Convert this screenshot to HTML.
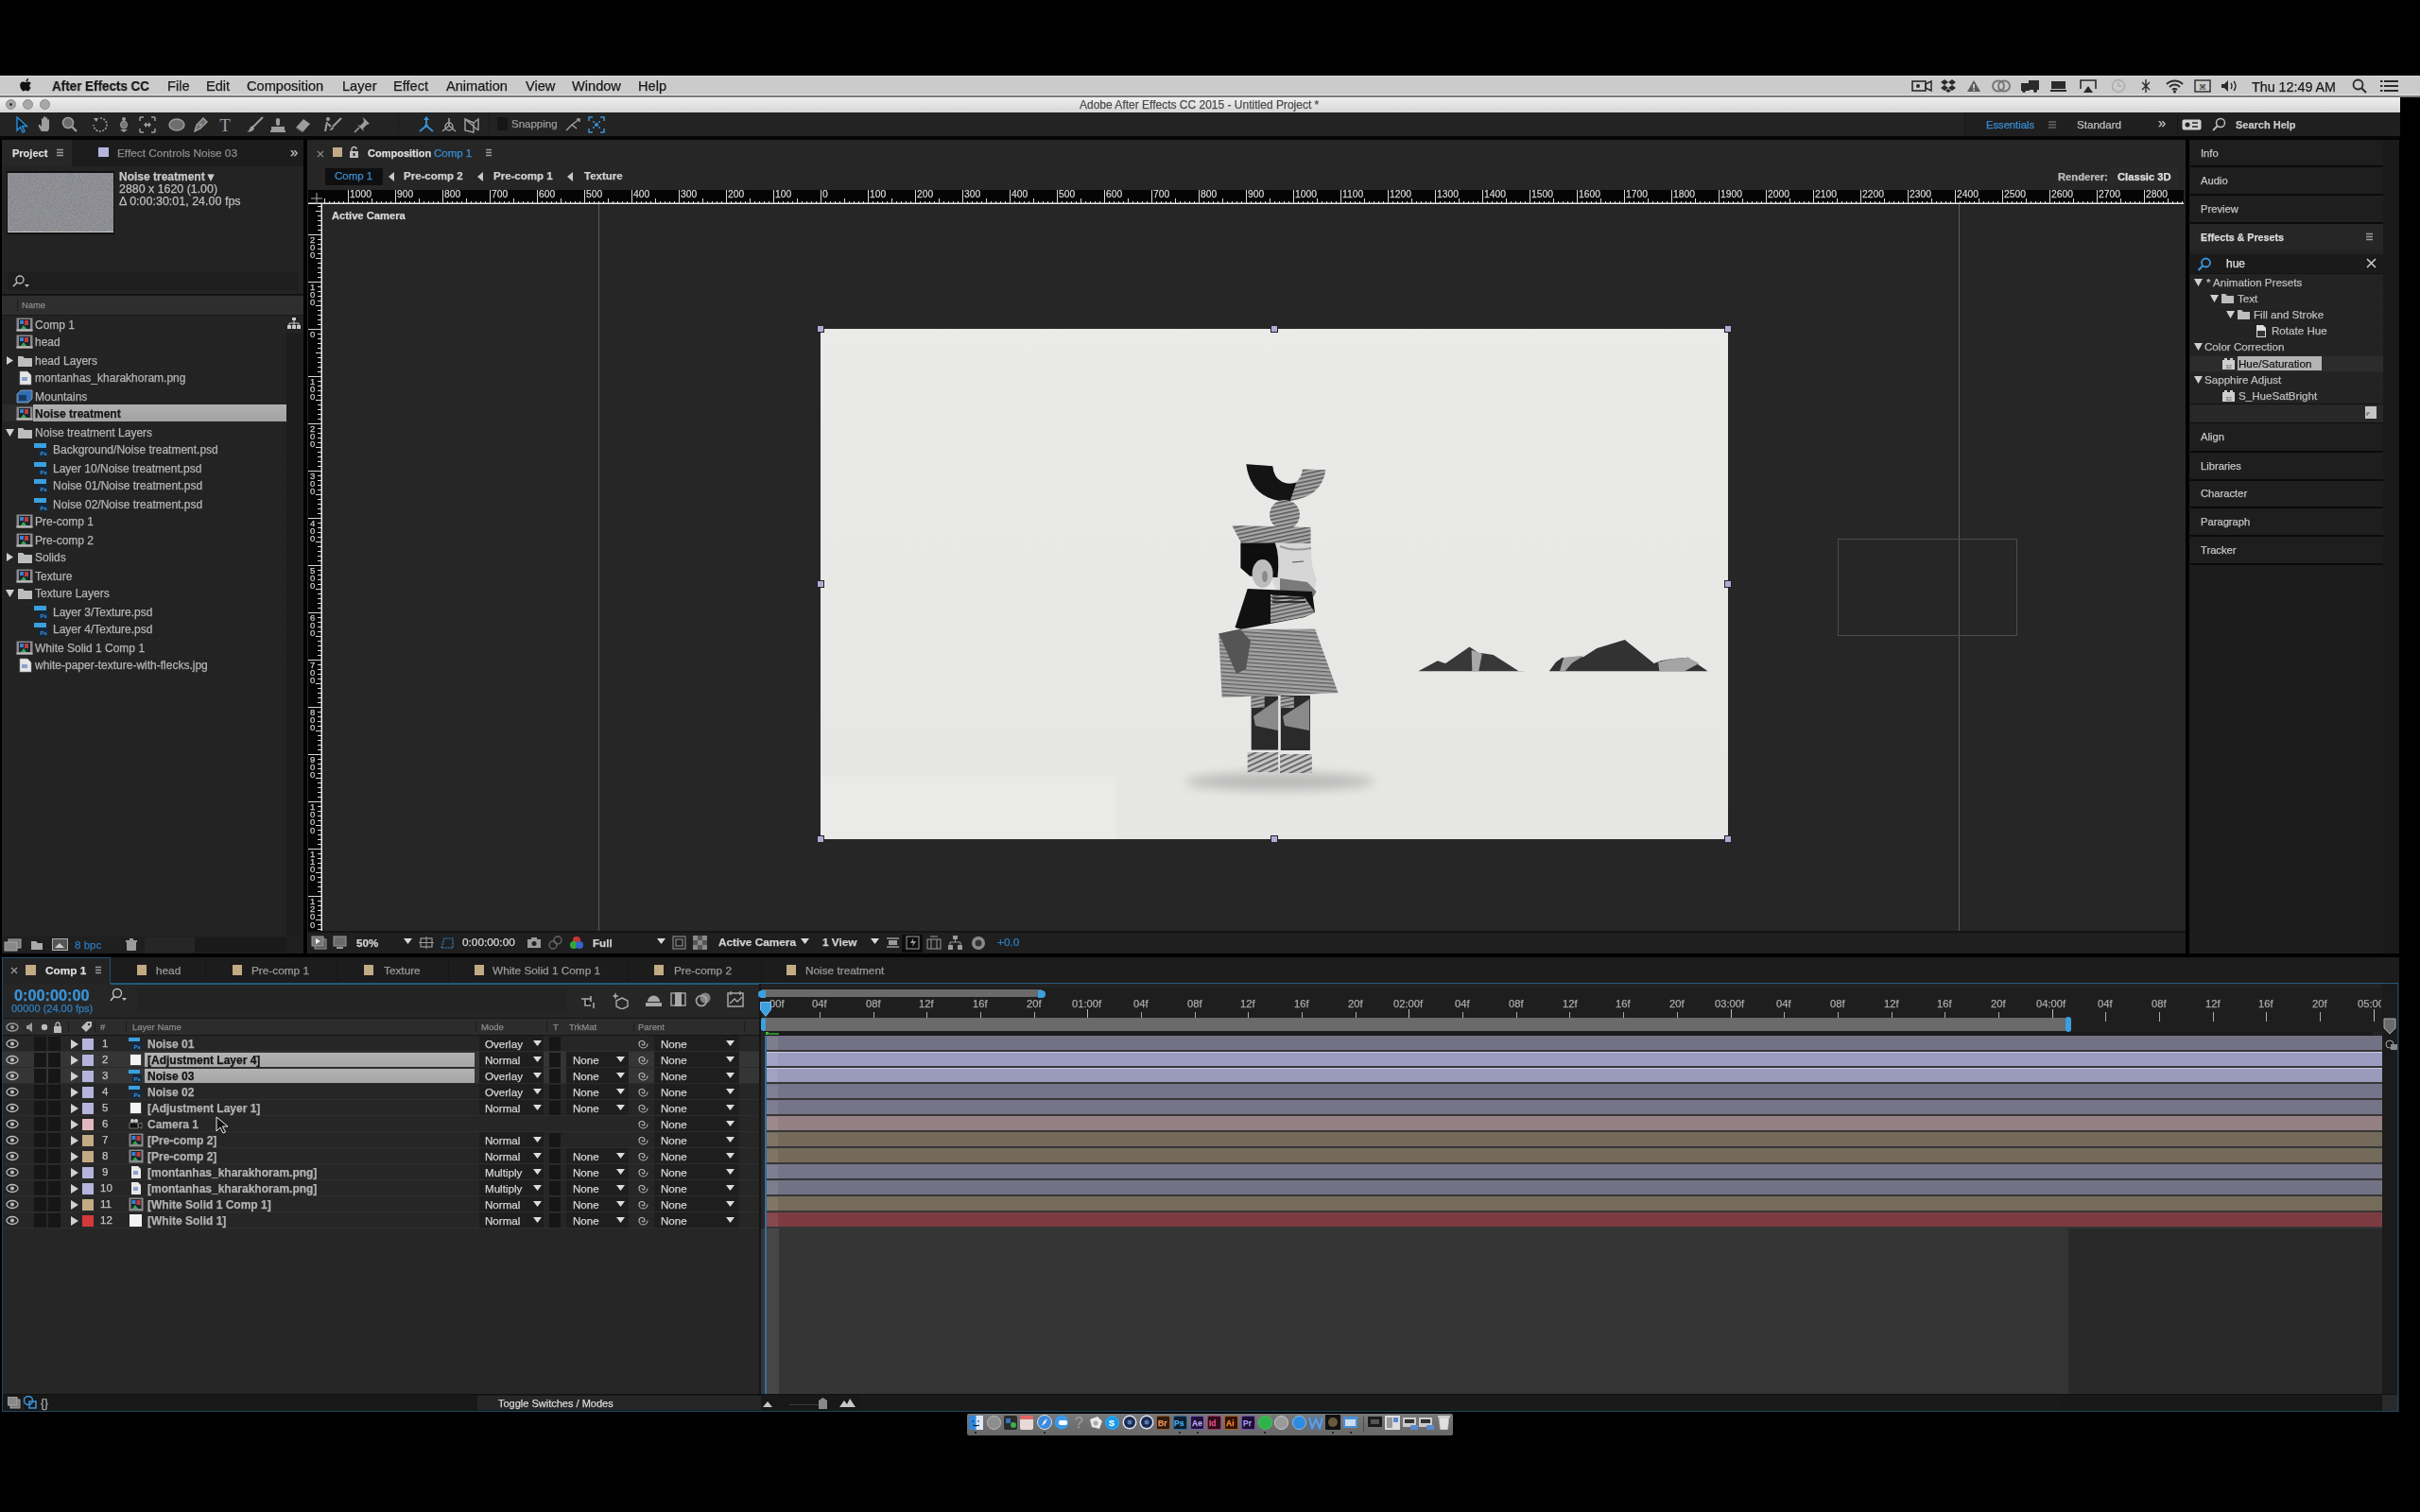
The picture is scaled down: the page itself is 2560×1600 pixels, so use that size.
<!DOCTYPE html>
<html><head><meta charset="utf-8">
<style>
*{margin:0;padding:0;box-sizing:border-box}
html,body{width:2560px;height:1600px;background:#000;overflow:hidden;font-family:"Liberation Sans",sans-serif}
.a{position:absolute;display:block}
.t{position:absolute;white-space:nowrap;line-height:1;will-change:transform;-webkit-text-stroke:0.25px currentColor}
</style></head><body>
<!-- p1_top -->
<div class="a" style="left:0px;top:80px;width:2560px;height:21px;background:#cbcbcb;"></div>
<div class="a" style="left:0px;top:80px;width:2560px;height:1px;background:#dcdcdc;"></div>
<div class="a" style="left:0px;top:100px;width:2560px;height:1px;background:#e2e2e2;"></div>
<div class="a" style="left:0px;top:101px;width:2560px;height:2px;background:#7a7a7a;"></div>
<svg class="a" style="left:20px;top:82px;" width="16" height="17" viewBox="0 0 16 17"><path d="M11.2 9.1c0-2 1.6-2.9 1.7-3-1-1.4-2.4-1.6-2.9-1.6-1.2-.1-2.4.7-3 .7-.6 0-1.6-.7-2.6-.7C2.9 4.5 1.2 5.6 1.2 8.2c0 1.6.6 3.3 1.4 4.4.7 1 1.3 1.8 2.2 1.8.9 0 1.2-.6 2.3-.6s1.3.6 2.3.6c.9 0 1.6-.9 2.2-1.8.7-1 .9-1.9 1-2-.1 0-1.9-.7-1.4-1.5zM9.4 3.3c.5-.6.8-1.4.7-2.2-.7 0-1.5.5-2 1.1-.4.5-.8 1.3-.7 2.1.8.1 1.5-.4 2-1z" fill="#111"/></svg>
<div class="t" style="left:54.5px;top:84.24px;font-size:14.6px;color:#151515;font-weight:700;transform:scaleX(0.92);transform-origin:0 0;font-weight:600">After Effects CC</div>
<div class="t" style="left:177px;top:84.24px;font-size:14.6px;color:#1a1a1a;font-weight:400;">File</div>
<div class="t" style="left:218px;top:84.24px;font-size:14.6px;color:#1a1a1a;font-weight:400;">Edit</div>
<div class="t" style="left:261px;top:84.24px;font-size:14.6px;color:#1a1a1a;font-weight:400;">Composition</div>
<div class="t" style="left:362px;top:84.24px;font-size:14.6px;color:#1a1a1a;font-weight:400;">Layer</div>
<div class="t" style="left:416px;top:84.24px;font-size:14.6px;color:#1a1a1a;font-weight:400;">Effect</div>
<div class="t" style="left:472px;top:84.24px;font-size:14.6px;color:#1a1a1a;font-weight:400;">Animation</div>
<div class="t" style="left:556px;top:84.24px;font-size:14.6px;color:#1a1a1a;font-weight:400;">View</div>
<div class="t" style="left:605px;top:84.24px;font-size:14.6px;color:#1a1a1a;font-weight:400;">Window</div>
<div class="t" style="left:675px;top:84.24px;font-size:14.6px;color:#1a1a1a;font-weight:400;">Help</div>
<svg class="a" style="left:2022px;top:84px;" width="22" height="14" viewBox="0 0 22 14"><rect x="1" y="2" width="14" height="10" fill="none" stroke="#2a2a2a" stroke-width="1.6"/><circle cx="7" cy="7" r="2" fill="#2a2a2a"/><path d="M15 5l6-3v10l-6-3z" fill="none" stroke="#2a2a2a" stroke-width="1.5"/></svg>
<svg class="a" style="left:2053px;top:83px;" width="16" height="16" viewBox="0 0 16 16"><path d="M4 1l4 3-4 3-4-3zM12 1l4 3-4 3-4-3zM4 7l4 3-4 3-4-3zM12 7l4 3-4 3-4-3zM8 11l3 2-3 2-3-2z" fill="#2a2a2a"/></svg>
<svg class="a" style="left:2080px;top:84px;" width="16" height="14" viewBox="0 0 16 14"><path d="M8 1l7 12H1z" fill="#5a5a5a"/><rect x="7.2" y="5" width="1.6" height="4.5" fill="#ddd"/><rect x="7.2" y="10.5" width="1.6" height="1.5" fill="#ddd"/></svg>
<svg class="a" style="left:2107px;top:84px;" width="20" height="14" viewBox="0 0 20 14"><ellipse cx="7" cy="7" rx="6" ry="5.5" fill="none" stroke="#777" stroke-width="2"/><ellipse cx="13" cy="7" rx="6" ry="5.5" fill="none" stroke="#777" stroke-width="2"/></svg>
<svg class="a" style="left:2138px;top:84px;" width="20" height="14" viewBox="0 0 20 14"><rect x="0" y="4" width="9" height="8" fill="#2a2a2a"/><rect x="8" y="1" width="11" height="10" fill="#2a2a2a"/><circle cx="3" cy="12" r="2" fill="#2a2a2a"/><circle cx="15" cy="12" r="2" fill="#2a2a2a"/></svg>
<svg class="a" style="left:2169px;top:85px;" width="17" height="12" viewBox="0 0 17 12"><rect x="1" y="1" width="15" height="8" fill="#2a2a2a"/><rect x="0" y="10" width="17" height="2" fill="#2a2a2a"/></svg>
<svg class="a" style="left:2199px;top:83px;" width="20" height="16" viewBox="0 0 20 16"><path d="M2 11V2h16v9" fill="none" stroke="#2a2a2a" stroke-width="1.6"/><path d="M10 8l5 7H5z" fill="#2a2a2a"/></svg>
<svg class="a" style="left:2230px;top:83px;" width="20" height="16" viewBox="0 0 20 16"><circle cx="11" cy="8" r="6.5" fill="none" stroke="#aaa" stroke-width="1.4"/><path d="M11 4v4h3" fill="none" stroke="#aaa" stroke-width="1.4"/></svg>
<svg class="a" style="left:2264px;top:83px;" width="12" height="16" viewBox="0 0 12 16"><path d="M6 1v14M2 4l8 8M2 12l8-8" stroke="#2a2a2a" stroke-width="1.4"/></svg>
<svg class="a" style="left:2290px;top:83px;" width="21" height="16" viewBox="0 0 21 16"><path d="M2 6a12 12 0 0 1 17 0M5 9a7.5 7.5 0 0 1 11 0M8 12a3.5 3.5 0 0 1 5 0" fill="none" stroke="#2a2a2a" stroke-width="2"/><circle cx="10.5" cy="14" r="1.5" fill="#2a2a2a"/></svg>
<svg class="a" style="left:2321px;top:84px;" width="18" height="14" viewBox="0 0 18 14"><rect x="1" y="1" width="16" height="12" fill="none" stroke="#2a2a2a" stroke-width="1.4"/><text x="9" y="11" font-size="8" text-anchor="middle" fill="#2a2a2a" font-family="Liberation Sans">&#8984;</text></svg>
<svg class="a" style="left:2349px;top:84px;" width="18" height="14" viewBox="0 0 18 14"><path d="M1 5h3l4-4v12l-4-4H1z" fill="#2a2a2a"/><path d="M11 4q2 3 0 6M14 2q4 5 0 10" fill="none" stroke="#2a2a2a" stroke-width="1.4"/></svg>
<div class="t" style="left:2381.5px;top:84.50px;font-size:14.3px;color:#1a1a1a;font-weight:400;">Thu 12:49 AM</div>
<svg class="a" style="left:2488px;top:83px;" width="17" height="16" viewBox="0 0 17 16"><circle cx="6.5" cy="6.5" r="5" fill="none" stroke="#2a2a2a" stroke-width="1.8"/><path d="M10 10l5 5" stroke="#2a2a2a" stroke-width="2"/></svg>
<svg class="a" style="left:2518px;top:84px;" width="19" height="14" viewBox="0 0 19 14"><g fill="#2a2a2a"><rect x="0" y="1" width="2.5" height="2"/><rect x="4" y="1" width="15" height="2"/><rect x="0" y="6" width="2.5" height="2"/><rect x="4" y="6" width="15" height="2"/><rect x="0" y="11" width="2.5" height="2"/><rect x="4" y="11" width="15" height="2"/></g></svg>
<div class="a" style="left:0px;top:103px;width:2539px;height:16px;background:linear-gradient(#efefef,#d6d6d6);"></div>
<div class="a" style="left:6.0px;top:105px;width:11px;height:11px;border-radius:50%;background:#a8a8a8;border:1px solid #8a8a8a"></div>
<div class="a" style="left:23.9px;top:105px;width:11px;height:11px;border-radius:50%;background:#a8a8a8;border:1px solid #8a8a8a"></div>
<div class="a" style="left:42.0px;top:105px;width:11px;height:11px;border-radius:50%;background:#a8a8a8;border:1px solid #8a8a8a"></div>
<div class="a" style="left:10px;top:109px;width:3px;height:3px;border-radius:50%;background:#333"></div>
<div class="t" style="left:1142.4px;top:105.34px;font-size:12px;color:#4d4d4d;font-weight:400;">Adobe After Effects CC 2015 - Untitled Project *</div>
<div class="a" style="left:0px;top:119px;width:2539px;height:25px;background:#232323;"></div>
<div class="a" style="left:0px;top:144px;width:2539px;height:4px;background:#050505;"></div>
<svg class="a" style="left:13px;top:122px;" width="20" height="20" viewBox="0 0 20 20"><path d="M5 2l0 14 3.5-3.5 2.5 5.5 2-1-2.5-5.5 5 0z" fill="#0d1a26" stroke="#2b8fd8" stroke-width="1.4"/></svg>
<svg class="a" style="left:39px;top:122px;" width="20" height="20" viewBox="0 0 20 20"><path d="M5 17c-2-3-4-6-3-7s2 1 3 2V4c0-1 2-1 2 0v5V2c0-1 2-1 2 0v7V3c0-1 2-1 2 0v6V5c0-1 2-1 2 0v8c0 2-1 4-2 4z" fill="#9d9d9d"/></svg>
<svg class="a" style="left:64px;top:122px;" width="20" height="20" viewBox="0 0 20 20"><circle cx="8" cy="8" r="5.5" fill="#6b6b6b" stroke="#9d9d9d" stroke-width="1.6"/><path d="M12 12l5 5" stroke="#9d9d9d" stroke-width="2.4"/></svg>
<svg class="a" style="left:96px;top:122px;" width="20" height="20" viewBox="0 0 20 20"><path d="M10 3a7 7 0 1 1-7 7" fill="none" stroke="#9d9d9d" stroke-width="1.6" stroke-dasharray="2 1.5"/><path d="M3 3l5 0-2 4z" fill="#9d9d9d"/></svg>
<svg class="a" style="left:121px;top:122px;" width="20" height="20" viewBox="0 0 20 20"><ellipse cx="10" cy="10" rx="3.5" ry="4" fill="#777" stroke="#9d9d9d"/><circle cx="10" cy="4" r="2" fill="#9d9d9d"/><path d="M6 15l4 3 4-3z" fill="#9d9d9d"/></svg>
<svg class="a" style="left:146px;top:122px;" width="20" height="20" viewBox="0 0 20 20"><path d="M2 2h4M14 2h4M2 18h4M14 18h4M2 2v4M18 2v4M2 14v4M18 14v4" stroke="#9d9d9d" stroke-width="1.5"/><path d="M6 10l3-3v6zM14 10l-3-3v6z" fill="#9d9d9d"/><rect x="8" y="9" width="4" height="2" fill="#9d9d9d"/></svg>
<svg class="a" style="left:177px;top:122px;" width="20" height="20" viewBox="0 0 20 20"><ellipse cx="10" cy="10" rx="8" ry="6" fill="#6e6e6e" stroke="#9d9d9d" stroke-width="1.4"/></svg>
<svg class="a" style="left:203px;top:122px;" width="20" height="20" viewBox="0 0 20 20"><path d="M3 17l2-7 7-7 4 4-7 7z" fill="#6e6e6e" stroke="#9d9d9d" stroke-width="1.4"/><circle cx="9" cy="10" r="1.5" fill="#9d9d9d"/></svg>
<svg class="a" style="left:228px;top:122px;" width="20" height="20" viewBox="0 0 20 20"><text x="10" y="17" font-size="19" text-anchor="middle" fill="#9d9d9d" font-family="Liberation Serif">T</text></svg>
<svg class="a" style="left:260px;top:122px;" width="20" height="20" viewBox="0 0 20 20"><path d="M18 2L8 12" stroke="#9d9d9d" stroke-width="2"/><path d="M8 11c-2 0-4 2-4 4-1 1-2 2-3 2 3 1 7 0 8-3z" fill="#9d9d9d"/></svg>
<svg class="a" style="left:284px;top:122px;" width="20" height="20" viewBox="0 0 20 20"><rect x="8" y="3" width="4" height="8" rx="2" fill="#9d9d9d"/><path d="M3 12h14v4H3z" fill="#9d9d9d"/><rect x="2" y="16" width="16" height="2" fill="#9d9d9d"/></svg>
<svg class="a" style="left:310px;top:122px;" width="20" height="20" viewBox="0 0 20 20"><path d="M3 13l8-9 7 5-8 9z" fill="#9d9d9d"/><path d="M3 13l7 5" stroke="#555" stroke-width="1.5"/></svg>
<svg class="a" style="left:342px;top:122px;" width="20" height="20" viewBox="0 0 20 20"><circle cx="5" cy="4" r="2" fill="#9d9d9d"/><path d="M4 7l-2 10M5 9l3 3" stroke="#9d9d9d" stroke-width="2"/><path d="M19 3l-9 9" stroke="#9d9d9d" stroke-width="2"/><path d="M10 12c-2 1-2 3-4 4 3 0 5-1 5-3z" fill="#9d9d9d"/></svg>
<svg class="a" style="left:373px;top:122px;" width="20" height="20" viewBox="0 0 20 20"><path d="M11 2l7 7-3 1-4 4 1 3-7-7 3 1 4-4z" fill="#9d9d9d"/><path d="M7 13l-5 5" stroke="#9d9d9d" stroke-width="1.6"/></svg>
<div class="a" style="left:421px;top:121px;width:1px;height:21px;background:#1a1a1a;"></div>
<div class="a" style="left:517px;top:121px;width:1px;height:21px;background:#1a1a1a;"></div>
<svg class="a" style="left:441px;top:122px;" width="20" height="20" viewBox="0 0 20 20"><path d="M10 3v8M10 11l-7 6M10 11l7 6" stroke="#3a93d8" stroke-width="1.8"/><path d="M7 5l3-4 3 4z" fill="#3a93d8"/><circle cx="10" cy="11" r="1.8" fill="#3a93d8"/></svg>
<svg class="a" style="left:465px;top:122px;" width="20" height="20" viewBox="0 0 20 20"><path d="M10 3v8M10 11l-7 6M10 11l7 6" stroke="#9d9d9d" stroke-width="1.6"/><circle cx="10" cy="12" r="4" fill="none" stroke="#9d9d9d" stroke-width="1.5"/></svg>
<svg class="a" style="left:489px;top:122px;" width="20" height="20" viewBox="0 0 20 20"><path d="M3 4l14 12M3 16V4l9 4v10zM12 8l5-4v12" fill="none" stroke="#9d9d9d" stroke-width="1.5"/></svg>
<div class="a" style="left:526px;top:124px;width:11px;height:14px;background:#161616;"></div>
<div class="t" style="left:541px;top:126.27px;font-size:11.5px;color:#9a9a9a;font-weight:400;">Snapping</div>
<svg class="a" style="left:596px;top:122px;" width="20" height="20" viewBox="0 0 20 20"><path d="M3 16l6-6 5 4M14 4l3 0 0 3M9 10l8-6" fill="none" stroke="#9d9d9d" stroke-width="1.5"/></svg>
<svg class="a" style="left:621px;top:122px;" width="20" height="20" viewBox="0 0 20 20"><path d="M2 6V2h4M14 2h4v4M2 14v4h4M18 14v4h-4" stroke="#3a93d8" stroke-width="1.5" fill="none"/><circle cx="10" cy="10" r="2" fill="#3a93d8"/><path d="M6 7h2M12 7h2M6 13h2M12 13h2" stroke="#3a93d8" stroke-width="1.5"/></svg>
<div class="a" style="left:2078px;top:119px;width:461px;height:25px;background:#1f1f1f;"></div>
<div class="a" style="left:2078px;top:121px;width:1px;height:21px;background:#151515;"></div>
<div class="t" style="left:2101px;top:126.52px;font-size:11.2px;color:#3a8ed4;font-weight:400;">Essentials</div>
<svg class="a" style="left:2166px;top:127px;" width="10" height="10" viewBox="0 0 10 10"><path d="M1 2h8M1 5h8M1 8h8" stroke="#8a8a8a" stroke-width="1.2"/></svg>
<div class="t" style="left:2197px;top:126.18px;font-size:11.6px;color:#bdbdbd;font-weight:400;">Standard</div>
<div class="t" style="left:2283px;top:121.80px;font-size:15px;color:#bdbdbd;font-weight:400;">&#187;</div>
<div class="a" style="left:2303px;top:121px;width:1px;height:21px;background:#151515;"></div>
<svg class="a" style="left:2308px;top:126px;" width="21" height="12" viewBox="0 0 21 12"><rect x="0.5" y="0.5" width="20" height="11" rx="2" fill="#cfcfcf"/><circle cx="6" cy="6" r="2.5" fill="#232323"/><path d="M11 4h6M11 8h6" stroke="#232323" stroke-width="1.6"/></svg>
<svg class="a" style="left:2340px;top:124px;" width="15" height="15" viewBox="0 0 15 15"><circle cx="9" cy="6" r="4.5" fill="none" stroke="#bdbdbd" stroke-width="1.5"/><path d="M6 9l-5 5" stroke="#bdbdbd" stroke-width="1.8"/></svg>
<div class="t" style="left:2365px;top:126.69px;font-size:11px;color:#c8c8c8;font-weight:700;">Search Help</div>
<!-- p2_project -->
<div class="a" style="left:2px;top:148px;width:319px;height:861px;background:#232323;"></div>
<div class="a" style="left:2px;top:148px;width:319px;height:28px;background:#1c1c1c;"></div>
<div class="a" style="left:2px;top:148px;width:74px;height:28px;background:#262626;"></div>
<div class="t" style="left:12.8px;top:157.19px;font-size:11px;color:#dcdcdc;font-weight:700;">Project</div>
<svg class="a" style="left:59px;top:157px;" width="9" height="10" viewBox="0 0 9 10"><path d="M1 1.5h7M1 4.5h7M1 7.5h7" stroke="#9a9a9a" stroke-width="1.3"/></svg>
<div class="a" style="left:104px;top:156px;width:11px;height:10px;background:#b4b4dc;"></div>
<div class="t" style="left:124px;top:156.51px;font-size:11.8px;color:#8c8c8c;font-weight:400;">Effect Controls Noise 03</div>
<div class="t" style="left:307px;top:153.30px;font-size:15px;color:#bdbdbd;font-weight:400;">&#187;</div>
<div class="a" style="left:7px;top:181px;width:114px;height:67px;background:#111;"></div>
<div class="a" style="left:8px;top:183px;width:112px;height:62px;background:#8e8e8c;"></div>
<svg class="a" style="left:8px;top:183px;" width="112" height="62" viewBox="0 0 112 62"><filter id="nz" color-interpolation-filters="sRGB"><feTurbulence type="fractalNoise" baseFrequency="0.7" numOctaves="2" seed="5"/><feColorMatrix values="0.35 0 0 0 0.38 0 0.35 0 0 0.38 0 0 0.5 0 0.34 0 0 0 0 0.7"/></filter><rect width="112" height="62" filter="url(#nz)"/></svg>
<div class="a" style="left:8px;top:245px;width:112px;height:1px;background:#c8c8c8;"></div>
<div class="t" style="left:126.3px;top:181.34px;font-size:12px;color:#c8c8c8;font-weight:700;">Noise treatment &#9662;</div>
<div class="t" style="left:126.3px;top:193.80px;font-size:12.4px;color:#bdbdbd;font-weight:400;">2880 x 1620 (1.00)</div>
<div class="t" style="left:126.3px;top:206.72px;font-size:12.5px;color:#bdbdbd;font-weight:400;">&#916; 0:00:30:01, 24.00 fps</div>
<div class="a" style="left:8px;top:288px;width:307px;height:19px;background:#1e1e1e;"></div>
<svg class="a" style="left:12px;top:290px;" width="20" height="16" viewBox="0 0 20 16"><circle cx="9" cy="6" r="4" fill="none" stroke="#bdbdbd" stroke-width="1.4"/><path d="M6 9l-4 4" stroke="#bdbdbd" stroke-width="1.6"/><path d="M14 11h5l-2.5 3z" fill="#bdbdbd"/></svg>
<div class="a" style="left:2px;top:311px;width:319px;height:2px;background:#141414;"></div>
<div class="a" style="left:2px;top:313px;width:319px;height:20px;background:#2e2e2e;"></div>
<div class="a" style="left:18px;top:318px;width:1px;height:11px;background:#1a1a1a;"></div>
<div class="t" style="left:23px;top:318.63px;font-size:9.3px;color:#8a8a8a;font-weight:400;">Name</div>
<div class="a" style="left:2px;top:333px;width:319px;height:1px;background:#1a1a1a;"></div>
<div class="a" style="left:303px;top:352px;width:18px;height:639px;background:#1d1d1d;"></div>
<svg class="a" style="left:17px;top:336px;" width="18" height="15" viewBox="0 0 18 15"><rect x="0.5" y="0.5" width="17" height="14" fill="#8a8a8a"/><rect x="3" y="2" width="12" height="10" fill="#1e2430"/><rect x="4" y="3" width="4" height="4" fill="#3d7fd0"/><rect x="9" y="3" width="4" height="5" fill="#c23b3b"/><path d="M5 12l3-4 3 4z" fill="#2fae4a"/><rect x="0.5" y="12.5" width="17" height="2" fill="#bdbdbd"/></svg>
<div class="t" style="left:37px;top:337.84px;font-size:12px;color:#b4b4b4;font-weight:400;">Comp 1</div>
<div class="a" style="left:3px;top:352px;width:300px;height:1px;background:#252525;"></div>
<svg class="a" style="left:17px;top:354px;" width="18" height="15" viewBox="0 0 18 15"><rect x="0.5" y="0.5" width="17" height="14" fill="#8a8a8a"/><rect x="3" y="2" width="12" height="10" fill="#1e2430"/><rect x="4" y="3" width="4" height="4" fill="#3d7fd0"/><rect x="9" y="3" width="4" height="5" fill="#c23b3b"/><path d="M5 12l3-4 3 4z" fill="#2fae4a"/><rect x="0.5" y="12.5" width="17" height="2" fill="#bdbdbd"/></svg>
<div class="t" style="left:37px;top:355.84px;font-size:12px;color:#b4b4b4;font-weight:400;">head</div>
<div class="a" style="left:3px;top:372px;width:300px;height:1px;background:#252525;"></div>
<svg class="a" style="left:18px;top:375px;" width="17" height="14" viewBox="0 0 17 14"><path d="M1 2h5l2 2h8v9H1z" fill="#bdbdbd"/></svg>
<svg class="a" style="left:6px;top:377px;" width="9" height="9" viewBox="0 0 9 9"><path d="M1 0l7 4.5-7 4.5z" fill="#cfcfcf"/></svg>
<div class="t" style="left:37px;top:375.84px;font-size:12px;color:#b4b4b4;font-weight:400;">head Layers</div>
<div class="a" style="left:3px;top:390px;width:300px;height:1px;background:#252525;"></div>
<svg class="a" style="left:20px;top:392px;" width="14" height="16" viewBox="0 0 14 16"><path d="M1 1h8l4 4v10H1z" fill="#e6e6e6" stroke="#999" stroke-width="0.6"/><rect x="3" y="7" width="6" height="4" fill="#8aa0d0"/></svg>
<div class="t" style="left:37px;top:393.84px;font-size:12px;color:#b4b4b4;font-weight:400;">montanhas_kharakhoram.png</div>
<div class="a" style="left:3px;top:410px;width:300px;height:1px;background:#252525;"></div>
<svg class="a" style="left:17px;top:412px;" width="18" height="15" viewBox="0 0 18 15"><path d="M1 5l4-4h12v9l-4 4H1z" fill="#2f6fb0" stroke="#9ab" stroke-width="0.8"/><rect x="3" y="6" width="8" height="6" fill="#1a3d66"/></svg>
<div class="t" style="left:37px;top:413.84px;font-size:12px;color:#b4b4b4;font-weight:400;">Mountains</div>
<div class="a" style="left:3px;top:428px;width:300px;height:1px;background:#252525;"></div>
<div class="a" style="left:3px;top:428px;width:32px;height:18px;background:#2c2c2c;"></div>
<div class="a" style="left:35px;top:428px;width:268px;height:18px;background:linear-gradient(#b0b0b0,#a2a2a2);"></div>
<svg class="a" style="left:17px;top:430px;" width="18" height="15" viewBox="0 0 18 15"><rect x="0.5" y="0.5" width="17" height="14" fill="#8a8a8a"/><rect x="3" y="2" width="12" height="10" fill="#1e2430"/><rect x="4" y="3" width="4" height="4" fill="#3d7fd0"/><rect x="9" y="3" width="4" height="5" fill="#c23b3b"/><path d="M5 12l3-4 3 4z" fill="#2fae4a"/><rect x="0.5" y="12.5" width="17" height="2" fill="#bdbdbd"/></svg>
<div class="t" style="left:37px;top:431.84px;font-size:12px;color:#141414;font-weight:700;">Noise treatment</div>
<div class="a" style="left:3px;top:448px;width:300px;height:1px;background:#252525;"></div>
<svg class="a" style="left:18px;top:451px;" width="17" height="14" viewBox="0 0 17 14"><path d="M1 2h5l2 2h8v9H1z" fill="#bdbdbd"/></svg>
<svg class="a" style="left:6px;top:454px;" width="9" height="8" viewBox="0 0 9 8"><path d="M0 0h9l-4.5 8z" fill="#cfcfcf"/></svg>
<div class="t" style="left:37px;top:451.84px;font-size:12px;color:#b4b4b4;font-weight:400;">Noise treatment Layers</div>
<div class="a" style="left:3px;top:466px;width:300px;height:1px;background:#252525;"></div>
<svg class="a" style="left:36px;top:468px;" width="17" height="16" viewBox="0 0 17 16"><rect x="0" y="1" width="13" height="5" fill="#3aa0e0"/><rect x="5" y="7" width="10" height="8" fill="#102a45"/><text x="10" y="13.5" font-size="6" text-anchor="middle" fill="#5ab4f0" font-family="Liberation Sans">Ps</text></svg>
<div class="t" style="left:56px;top:469.84px;font-size:12px;color:#b4b4b4;font-weight:400;">Background/Noise treatment.psd</div>
<div class="a" style="left:3px;top:486px;width:300px;height:1px;background:#252525;"></div>
<svg class="a" style="left:36px;top:488px;" width="17" height="16" viewBox="0 0 17 16"><rect x="0" y="1" width="13" height="5" fill="#3aa0e0"/><rect x="5" y="7" width="10" height="8" fill="#102a45"/><text x="10" y="13.5" font-size="6" text-anchor="middle" fill="#5ab4f0" font-family="Liberation Sans">Ps</text></svg>
<div class="t" style="left:56px;top:489.84px;font-size:12px;color:#b4b4b4;font-weight:400;">Layer 10/Noise treatment.psd</div>
<div class="a" style="left:3px;top:504px;width:300px;height:1px;background:#252525;"></div>
<svg class="a" style="left:36px;top:506px;" width="17" height="16" viewBox="0 0 17 16"><rect x="0" y="1" width="13" height="5" fill="#3aa0e0"/><rect x="5" y="7" width="10" height="8" fill="#102a45"/><text x="10" y="13.5" font-size="6" text-anchor="middle" fill="#5ab4f0" font-family="Liberation Sans">Ps</text></svg>
<div class="t" style="left:56px;top:507.84px;font-size:12px;color:#b4b4b4;font-weight:400;">Noise 01/Noise treatment.psd</div>
<div class="a" style="left:3px;top:524px;width:300px;height:1px;background:#252525;"></div>
<svg class="a" style="left:36px;top:526px;" width="17" height="16" viewBox="0 0 17 16"><rect x="0" y="1" width="13" height="5" fill="#3aa0e0"/><rect x="5" y="7" width="10" height="8" fill="#102a45"/><text x="10" y="13.5" font-size="6" text-anchor="middle" fill="#5ab4f0" font-family="Liberation Sans">Ps</text></svg>
<div class="t" style="left:56px;top:527.84px;font-size:12px;color:#b4b4b4;font-weight:400;">Noise 02/Noise treatment.psd</div>
<div class="a" style="left:3px;top:542px;width:300px;height:1px;background:#252525;"></div>
<svg class="a" style="left:17px;top:544px;" width="18" height="15" viewBox="0 0 18 15"><rect x="0.5" y="0.5" width="17" height="14" fill="#8a8a8a"/><rect x="3" y="2" width="12" height="10" fill="#1e2430"/><rect x="4" y="3" width="4" height="4" fill="#3d7fd0"/><rect x="9" y="3" width="4" height="5" fill="#c23b3b"/><path d="M5 12l3-4 3 4z" fill="#2fae4a"/><rect x="0.5" y="12.5" width="17" height="2" fill="#bdbdbd"/></svg>
<div class="t" style="left:37px;top:545.84px;font-size:12px;color:#b4b4b4;font-weight:400;">Pre-comp 1</div>
<div class="a" style="left:3px;top:562px;width:300px;height:1px;background:#252525;"></div>
<svg class="a" style="left:17px;top:564px;" width="18" height="15" viewBox="0 0 18 15"><rect x="0.5" y="0.5" width="17" height="14" fill="#8a8a8a"/><rect x="3" y="2" width="12" height="10" fill="#1e2430"/><rect x="4" y="3" width="4" height="4" fill="#3d7fd0"/><rect x="9" y="3" width="4" height="5" fill="#c23b3b"/><path d="M5 12l3-4 3 4z" fill="#2fae4a"/><rect x="0.5" y="12.5" width="17" height="2" fill="#bdbdbd"/></svg>
<div class="t" style="left:37px;top:565.84px;font-size:12px;color:#b4b4b4;font-weight:400;">Pre-comp 2</div>
<div class="a" style="left:3px;top:580px;width:300px;height:1px;background:#252525;"></div>
<svg class="a" style="left:18px;top:583px;" width="17" height="14" viewBox="0 0 17 14"><path d="M1 2h5l2 2h8v9H1z" fill="#bdbdbd"/></svg>
<svg class="a" style="left:6px;top:585px;" width="9" height="9" viewBox="0 0 9 9"><path d="M1 0l7 4.5-7 4.5z" fill="#cfcfcf"/></svg>
<div class="t" style="left:37px;top:583.84px;font-size:12px;color:#b4b4b4;font-weight:400;">Solids</div>
<div class="a" style="left:3px;top:600px;width:300px;height:1px;background:#252525;"></div>
<svg class="a" style="left:17px;top:602px;" width="18" height="15" viewBox="0 0 18 15"><rect x="0.5" y="0.5" width="17" height="14" fill="#8a8a8a"/><rect x="3" y="2" width="12" height="10" fill="#1e2430"/><rect x="4" y="3" width="4" height="4" fill="#3d7fd0"/><rect x="9" y="3" width="4" height="5" fill="#c23b3b"/><path d="M5 12l3-4 3 4z" fill="#2fae4a"/><rect x="0.5" y="12.5" width="17" height="2" fill="#bdbdbd"/></svg>
<div class="t" style="left:37px;top:603.84px;font-size:12px;color:#b4b4b4;font-weight:400;">Texture</div>
<div class="a" style="left:3px;top:618px;width:300px;height:1px;background:#252525;"></div>
<svg class="a" style="left:18px;top:621px;" width="17" height="14" viewBox="0 0 17 14"><path d="M1 2h5l2 2h8v9H1z" fill="#bdbdbd"/></svg>
<svg class="a" style="left:6px;top:624px;" width="9" height="8" viewBox="0 0 9 8"><path d="M0 0h9l-4.5 8z" fill="#cfcfcf"/></svg>
<div class="t" style="left:37px;top:621.84px;font-size:12px;color:#b4b4b4;font-weight:400;">Texture Layers</div>
<div class="a" style="left:3px;top:638px;width:300px;height:1px;background:#252525;"></div>
<svg class="a" style="left:36px;top:640px;" width="17" height="16" viewBox="0 0 17 16"><rect x="0" y="1" width="13" height="5" fill="#3aa0e0"/><rect x="5" y="7" width="10" height="8" fill="#102a45"/><text x="10" y="13.5" font-size="6" text-anchor="middle" fill="#5ab4f0" font-family="Liberation Sans">Ps</text></svg>
<div class="t" style="left:56px;top:641.84px;font-size:12px;color:#b4b4b4;font-weight:400;">Layer 3/Texture.psd</div>
<div class="a" style="left:3px;top:656px;width:300px;height:1px;background:#252525;"></div>
<svg class="a" style="left:36px;top:658px;" width="17" height="16" viewBox="0 0 17 16"><rect x="0" y="1" width="13" height="5" fill="#3aa0e0"/><rect x="5" y="7" width="10" height="8" fill="#102a45"/><text x="10" y="13.5" font-size="6" text-anchor="middle" fill="#5ab4f0" font-family="Liberation Sans">Ps</text></svg>
<div class="t" style="left:56px;top:659.84px;font-size:12px;color:#b4b4b4;font-weight:400;">Layer 4/Texture.psd</div>
<div class="a" style="left:3px;top:676px;width:300px;height:1px;background:#252525;"></div>
<svg class="a" style="left:17px;top:678px;" width="18" height="15" viewBox="0 0 18 15"><rect x="0.5" y="0.5" width="17" height="14" fill="#8a8a8a"/><rect x="3" y="2" width="12" height="10" fill="#1e2430"/><rect x="4" y="3" width="4" height="4" fill="#3d7fd0"/><rect x="9" y="3" width="4" height="5" fill="#c23b3b"/><path d="M5 12l3-4 3 4z" fill="#2fae4a"/><rect x="0.5" y="12.5" width="17" height="2" fill="#bdbdbd"/></svg>
<div class="t" style="left:37px;top:679.84px;font-size:12px;color:#b4b4b4;font-weight:400;">White Solid 1 Comp 1</div>
<div class="a" style="left:3px;top:694px;width:300px;height:1px;background:#252525;"></div>
<svg class="a" style="left:20px;top:696px;" width="14" height="16" viewBox="0 0 14 16"><path d="M1 1h8l4 4v10H1z" fill="#e6e6e6" stroke="#999" stroke-width="0.6"/><rect x="3" y="7" width="6" height="4" fill="#8aa0d0"/></svg>
<div class="t" style="left:37px;top:697.84px;font-size:12px;color:#b4b4b4;font-weight:400;">white-paper-texture-with-flecks.jpg</div>
<svg class="a" style="left:304px;top:336px;" width="14" height="12" viewBox="0 0 14 12"><rect x="5" y="0" width="4" height="3" fill="#c8c8c8"/><path d="M7 3v3M2 6h10M2 6v2M7 6v2M12 6v2" stroke="#c8c8c8" stroke-width="1"/><rect x="0" y="8" width="4" height="4" fill="#c8c8c8"/><rect x="5" y="8" width="4" height="4" fill="#c8c8c8"/><rect x="10" y="8" width="4" height="4" fill="#c8c8c8"/></svg>
<div class="a" style="left:2px;top:991px;width:319px;height:18px;background:#1f1f1f;"></div>
<div class="a" style="left:153px;top:992px;width:53px;height:16px;background:#262626;"></div>
<div class="a" style="left:206px;top:992px;width:97px;height:16px;background:#1a1a1a;"></div>
<svg class="a" style="left:4px;top:993px;" width="19" height="14" viewBox="0 0 19 14"><rect x="5" y="1" width="13" height="9" fill="#777" stroke="#aaa"/><rect x="1" y="4" width="13" height="9" fill="#888" stroke="#aaa"/></svg>
<svg class="a" style="left:32px;top:994px;" width="14" height="12" viewBox="0 0 14 12"><path d="M1 2h5l2 2h5v7H1z" fill="#aaa"/></svg>
<svg class="a" style="left:55px;top:993px;" width="17" height="14" viewBox="0 0 17 14"><rect x="0.5" y="0.5" width="16" height="12" fill="#555" stroke="#aaa"/><path d="M3 10l5-5 5 5z" fill="#ccc"/></svg>
<div class="t" style="left:79px;top:994.18px;font-size:11.6px;color:#2f78b8;font-weight:400;">8 bpc</div>
<svg class="a" style="left:133px;top:993px;" width="12" height="14" viewBox="0 0 12 14"><rect x="1" y="3" width="10" height="10" rx="1" fill="#9a9a9a"/><rect x="0" y="2" width="12" height="2" fill="#9a9a9a"/><rect x="4" y="0" width="4" height="2" fill="#9a9a9a"/></svg>
<!-- p3_comp -->
<div class="a" style="left:325px;top:148px;width:1987px;height:861px;background:#262626;"></div>
<svg class="a" style="left:334px;top:158px;" width="10" height="10" viewBox="0 0 10 10"><path d="M2 2l6 6M8 2l-6 6" stroke="#8a8a8a" stroke-width="1.2"/></svg>
<div class="a" style="left:352px;top:156px;width:10px;height:10px;background:#c2aa84;"></div>
<svg class="a" style="left:369px;top:154px;" width="11" height="13" viewBox="0 0 11 13"><path d="M3 6V4a2.5 2.5 0 0 1 5 0" fill="none" stroke="#bdbdbd" stroke-width="1.4"/><rect x="1" y="6" width="9" height="7" fill="#bdbdbd"/><rect x="4.5" y="8" width="2" height="3" fill="#262626"/></svg>
<div class="t" style="left:388.8px;top:157.19px;font-size:11px;color:#dedede;font-weight:700;">Composition</div>
<div class="t" style="left:459px;top:156.77px;font-size:11.5px;color:#3a8ed4;font-weight:400;">Comp 1</div>
<svg class="a" style="left:513px;top:157px;" width="8" height="10" viewBox="0 0 8 10"><path d="M1 1.5h6M1 4.5h6M1 7.5h6" stroke="#9a9a9a" stroke-width="1.3"/></svg>
<div class="a" style="left:344px;top:178px;width:61px;height:18px;background:#0f0f0f;"></div>
<div class="t" style="left:354px;top:181.27px;font-size:11.5px;color:#3a8ed4;font-weight:400;">Comp 1</div>
<svg class="a" style="left:411px;top:182px;" width="7" height="10" viewBox="0 0 7 10"><path d="M6 0v10L0 5z" fill="#c8c8c8"/></svg>
<svg class="a" style="left:505px;top:182px;" width="7" height="10" viewBox="0 0 7 10"><path d="M6 0v10L0 5z" fill="#c8c8c8"/></svg>
<svg class="a" style="left:600px;top:182px;" width="7" height="10" viewBox="0 0 7 10"><path d="M6 0v10L0 5z" fill="#c8c8c8"/></svg>
<div class="t" style="left:427px;top:181.27px;font-size:11.5px;color:#d0d0d0;font-weight:700;">Pre-comp 2</div>
<div class="t" style="left:522px;top:181.27px;font-size:11.5px;color:#d0d0d0;font-weight:700;">Pre-comp 1</div>
<div class="t" style="left:617.6px;top:181.27px;font-size:11.5px;color:#d0d0d0;font-weight:700;">Texture</div>
<div class="t" style="left:2177px;top:181.52px;font-size:11.2px;color:#bdbdbd;font-weight:700;">Renderer:</div>
<div class="a" style="left:2232px;top:178px;width:72px;height:18px;background:#282828;"></div>
<div class="t" style="left:2240px;top:181.52px;font-size:11.2px;color:#e0e0e0;font-weight:700;">Classic 3D</div>
<div class="a" style="left:326px;top:201px;width:1984px;height:15px;background:#050505;"></div>
<svg class="a" style="left:326px;top:201px;" width="1984" height="15" viewBox="0 0 1984 15"><path d="M17.5 9V15 M22.5 12V15 M27.5 12V15 M32.5 12V15 M37.5 12V15 M42.5 0V15 M47.5 12V15 M52.5 12V15 M57.5 12V15 M62.5 12V15 M67.5 9V15 M72.5 12V15 M77.5 12V15 M82.5 12V15 M87.5 12V15 M92.5 0V15 M97.5 12V15 M102.5 12V15 M107.5 12V15 M112.5 12V15 M117.5 9V15 M122.5 12V15 M127.5 12V15 M132.5 12V15 M137.5 12V15 M142.5 0V15 M147.5 12V15 M152.5 12V15 M157.5 12V15 M162.5 12V15 M167.5 9V15 M172.5 12V15 M177.5 12V15 M182.5 12V15 M187.5 12V15 M192.5 0V15 M197.5 12V15 M202.5 12V15 M207.5 12V15 M212.5 12V15 M217.5 9V15 M222.5 12V15 M227.5 12V15 M232.5 12V15 M237.5 12V15 M242.5 0V15 M247.5 12V15 M252.5 12V15 M257.5 12V15 M262.5 12V15 M267.5 9V15 M272.5 12V15 M277.5 12V15 M282.5 12V15 M287.5 12V15 M292.5 0V15 M297.5 12V15 M302.5 12V15 M307.5 12V15 M312.5 12V15 M317.5 9V15 M322.5 12V15 M327.5 12V15 M332.5 12V15 M337.5 12V15 M342.5 0V15 M347.5 12V15 M352.5 12V15 M357.5 12V15 M362.5 12V15 M367.5 9V15 M372.5 12V15 M377.5 12V15 M382.5 12V15 M387.5 12V15 M392.5 0V15 M397.5 12V15 M402.5 12V15 M407.5 12V15 M412.5 12V15 M417.5 9V15 M422.5 12V15 M427.5 12V15 M432.5 12V15 M437.5 12V15 M442.5 0V15 M447.5 12V15 M452.5 12V15 M457.5 12V15 M462.5 12V15 M467.5 9V15 M472.5 12V15 M477.5 12V15 M482.5 12V15 M487.5 12V15 M492.5 0V15 M497.5 12V15 M502.5 12V15 M507.5 12V15 M512.5 12V15 M517.5 9V15 M522.5 12V15 M527.5 12V15 M532.5 12V15 M537.5 12V15 M542.5 0V15 M547.5 12V15 M552.5 12V15 M557.5 12V15 M562.5 12V15 M567.5 9V15 M572.5 12V15 M577.5 12V15 M582.5 12V15 M587.5 12V15 M592.5 0V15 M597.5 12V15 M602.5 12V15 M607.5 12V15 M612.5 12V15 M617.5 9V15 M622.5 12V15 M627.5 12V15 M632.5 12V15 M637.5 12V15 M642.5 0V15 M647.5 12V15 M652.5 12V15 M657.5 12V15 M662.5 12V15 M667.5 9V15 M672.5 12V15 M677.5 12V15 M682.5 12V15 M687.5 12V15 M692.5 0V15 M697.5 12V15 M702.5 12V15 M707.5 12V15 M712.5 12V15 M717.5 9V15 M722.5 12V15 M727.5 12V15 M732.5 12V15 M737.5 12V15 M742.5 0V15 M747.5 12V15 M752.5 12V15 M757.5 12V15 M762.5 12V15 M767.5 9V15 M772.5 12V15 M777.5 12V15 M782.5 12V15 M787.5 12V15 M792.5 0V15 M797.5 12V15 M802.5 12V15 M807.5 12V15 M812.5 12V15 M817.5 9V15 M822.5 12V15 M827.5 12V15 M832.5 12V15 M837.5 12V15 M842.5 0V15 M847.5 12V15 M852.5 12V15 M857.5 12V15 M862.5 12V15 M867.5 9V15 M872.5 12V15 M877.5 12V15 M882.5 12V15 M887.5 12V15 M892.5 0V15 M897.5 12V15 M902.5 12V15 M907.5 12V15 M912.5 12V15 M917.5 9V15 M922.5 12V15 M927.5 12V15 M932.5 12V15 M937.5 12V15 M942.5 0V15 M947.5 12V15 M952.5 12V15 M957.5 12V15 M962.5 12V15 M967.5 9V15 M972.5 12V15 M977.5 12V15 M982.5 12V15 M987.5 12V15 M992.5 0V15 M997.5 12V15 M1002.5 12V15 M1007.5 12V15 M1012.5 12V15 M1017.5 9V15 M1022.5 12V15 M1027.5 12V15 M1032.5 12V15 M1037.5 12V15 M1042.5 0V15 M1047.5 12V15 M1052.5 12V15 M1057.5 12V15 M1062.5 12V15 M1067.5 9V15 M1072.5 12V15 M1077.5 12V15 M1082.5 12V15 M1087.5 12V15 M1092.5 0V15 M1097.5 12V15 M1102.5 12V15 M1107.5 12V15 M1112.5 12V15 M1117.5 9V15 M1122.5 12V15 M1127.5 12V15 M1132.5 12V15 M1137.5 12V15 M1142.5 0V15 M1147.5 12V15 M1152.5 12V15 M1157.5 12V15 M1162.5 12V15 M1167.5 9V15 M1172.5 12V15 M1177.5 12V15 M1182.5 12V15 M1187.5 12V15 M1192.5 0V15 M1197.5 12V15 M1202.5 12V15 M1207.5 12V15 M1212.5 12V15 M1217.5 9V15 M1222.5 12V15 M1227.5 12V15 M1232.5 12V15 M1237.5 12V15 M1242.5 0V15 M1247.5 12V15 M1252.5 12V15 M1257.5 12V15 M1262.5 12V15 M1267.5 9V15 M1272.5 12V15 M1277.5 12V15 M1282.5 12V15 M1287.5 12V15 M1292.5 0V15 M1297.5 12V15 M1302.5 12V15 M1307.5 12V15 M1312.5 12V15 M1317.5 9V15 M1322.5 12V15 M1327.5 12V15 M1332.5 12V15 M1337.5 12V15 M1342.5 0V15 M1347.5 12V15 M1352.5 12V15 M1357.5 12V15 M1362.5 12V15 M1367.5 9V15 M1372.5 12V15 M1377.5 12V15 M1382.5 12V15 M1387.5 12V15 M1392.5 0V15 M1397.5 12V15 M1402.5 12V15 M1407.5 12V15 M1412.5 12V15 M1417.5 9V15 M1422.5 12V15 M1427.5 12V15 M1432.5 12V15 M1437.5 12V15 M1442.5 0V15 M1447.5 12V15 M1452.5 12V15 M1457.5 12V15 M1462.5 12V15 M1467.5 9V15 M1472.5 12V15 M1477.5 12V15 M1482.5 12V15 M1487.5 12V15 M1492.5 0V15 M1497.5 12V15 M1502.5 12V15 M1507.5 12V15 M1512.5 12V15 M1517.5 9V15 M1522.5 12V15 M1527.5 12V15 M1532.5 12V15 M1537.5 12V15 M1542.5 0V15 M1547.5 12V15 M1552.5 12V15 M1557.5 12V15 M1562.5 12V15 M1567.5 9V15 M1572.5 12V15 M1577.5 12V15 M1582.5 12V15 M1587.5 12V15 M1592.5 0V15 M1597.5 12V15 M1602.5 12V15 M1607.5 12V15 M1612.5 12V15 M1617.5 9V15 M1622.5 12V15 M1627.5 12V15 M1632.5 12V15 M1637.5 12V15 M1642.5 0V15 M1647.5 12V15 M1652.5 12V15 M1657.5 12V15 M1662.5 12V15 M1667.5 9V15 M1672.5 12V15 M1677.5 12V15 M1682.5 12V15 M1687.5 12V15 M1692.5 0V15 M1697.5 12V15 M1702.5 12V15 M1707.5 12V15 M1712.5 12V15 M1717.5 9V15 M1722.5 12V15 M1727.5 12V15 M1732.5 12V15 M1737.5 12V15 M1742.5 0V15 M1747.5 12V15 M1752.5 12V15 M1757.5 12V15 M1762.5 12V15 M1767.5 9V15 M1772.5 12V15 M1777.5 12V15 M1782.5 12V15 M1787.5 12V15 M1792.5 0V15 M1797.5 12V15 M1802.5 12V15 M1807.5 12V15 M1812.5 12V15 M1817.5 9V15 M1822.5 12V15 M1827.5 12V15 M1832.5 12V15 M1837.5 12V15 M1842.5 0V15 M1847.5 12V15 M1852.5 12V15 M1857.5 12V15 M1862.5 12V15 M1867.5 9V15 M1872.5 12V15 M1877.5 12V15 M1882.5 12V15 M1887.5 12V15 M1892.5 0V15 M1897.5 12V15 M1902.5 12V15 M1907.5 12V15 M1912.5 12V15 M1917.5 9V15 M1922.5 12V15 M1927.5 12V15 M1932.5 12V15 M1937.5 12V15 M1942.5 0V15 M1947.5 12V15 M1952.5 12V15 M1957.5 12V15 M1962.5 12V15 M1967.5 9V15 M1972.5 12V15 M1977.5 12V15 M1982.5 12V15" stroke="#d8d8d8" stroke-width="1"/><rect x="0" y="13.5" width="1984" height="1.5" fill="#e8e8e8"/></svg>
<div class="t" style="left:370px;top:200.78px;font-size:10.3px;color:#d4d4d4;font-weight:400;">1000</div>
<div class="t" style="left:420px;top:200.78px;font-size:10.3px;color:#d4d4d4;font-weight:400;">900</div>
<div class="t" style="left:470px;top:200.78px;font-size:10.3px;color:#d4d4d4;font-weight:400;">800</div>
<div class="t" style="left:520px;top:200.78px;font-size:10.3px;color:#d4d4d4;font-weight:400;">700</div>
<div class="t" style="left:570px;top:200.78px;font-size:10.3px;color:#d4d4d4;font-weight:400;">600</div>
<div class="t" style="left:620px;top:200.78px;font-size:10.3px;color:#d4d4d4;font-weight:400;">500</div>
<div class="t" style="left:670px;top:200.78px;font-size:10.3px;color:#d4d4d4;font-weight:400;">400</div>
<div class="t" style="left:720px;top:200.78px;font-size:10.3px;color:#d4d4d4;font-weight:400;">300</div>
<div class="t" style="left:770px;top:200.78px;font-size:10.3px;color:#d4d4d4;font-weight:400;">200</div>
<div class="t" style="left:820px;top:200.78px;font-size:10.3px;color:#d4d4d4;font-weight:400;">100</div>
<div class="t" style="left:870px;top:200.78px;font-size:10.3px;color:#d4d4d4;font-weight:400;">0</div>
<div class="t" style="left:920px;top:200.78px;font-size:10.3px;color:#d4d4d4;font-weight:400;">100</div>
<div class="t" style="left:970px;top:200.78px;font-size:10.3px;color:#d4d4d4;font-weight:400;">200</div>
<div class="t" style="left:1020px;top:200.78px;font-size:10.3px;color:#d4d4d4;font-weight:400;">300</div>
<div class="t" style="left:1070px;top:200.78px;font-size:10.3px;color:#d4d4d4;font-weight:400;">400</div>
<div class="t" style="left:1120px;top:200.78px;font-size:10.3px;color:#d4d4d4;font-weight:400;">500</div>
<div class="t" style="left:1170px;top:200.78px;font-size:10.3px;color:#d4d4d4;font-weight:400;">600</div>
<div class="t" style="left:1220px;top:200.78px;font-size:10.3px;color:#d4d4d4;font-weight:400;">700</div>
<div class="t" style="left:1270px;top:200.78px;font-size:10.3px;color:#d4d4d4;font-weight:400;">800</div>
<div class="t" style="left:1320px;top:200.78px;font-size:10.3px;color:#d4d4d4;font-weight:400;">900</div>
<div class="t" style="left:1370px;top:200.78px;font-size:10.3px;color:#d4d4d4;font-weight:400;">1000</div>
<div class="t" style="left:1420px;top:200.78px;font-size:10.3px;color:#d4d4d4;font-weight:400;">1100</div>
<div class="t" style="left:1470px;top:200.78px;font-size:10.3px;color:#d4d4d4;font-weight:400;">1200</div>
<div class="t" style="left:1520px;top:200.78px;font-size:10.3px;color:#d4d4d4;font-weight:400;">1300</div>
<div class="t" style="left:1570px;top:200.78px;font-size:10.3px;color:#d4d4d4;font-weight:400;">1400</div>
<div class="t" style="left:1620px;top:200.78px;font-size:10.3px;color:#d4d4d4;font-weight:400;">1500</div>
<div class="t" style="left:1670px;top:200.78px;font-size:10.3px;color:#d4d4d4;font-weight:400;">1600</div>
<div class="t" style="left:1720px;top:200.78px;font-size:10.3px;color:#d4d4d4;font-weight:400;">1700</div>
<div class="t" style="left:1770px;top:200.78px;font-size:10.3px;color:#d4d4d4;font-weight:400;">1800</div>
<div class="t" style="left:1820px;top:200.78px;font-size:10.3px;color:#d4d4d4;font-weight:400;">1900</div>
<div class="t" style="left:1870px;top:200.78px;font-size:10.3px;color:#d4d4d4;font-weight:400;">2000</div>
<div class="t" style="left:1920px;top:200.78px;font-size:10.3px;color:#d4d4d4;font-weight:400;">2100</div>
<div class="t" style="left:1970px;top:200.78px;font-size:10.3px;color:#d4d4d4;font-weight:400;">2200</div>
<div class="t" style="left:2020px;top:200.78px;font-size:10.3px;color:#d4d4d4;font-weight:400;">2300</div>
<div class="t" style="left:2070px;top:200.78px;font-size:10.3px;color:#d4d4d4;font-weight:400;">2400</div>
<div class="t" style="left:2120px;top:200.78px;font-size:10.3px;color:#d4d4d4;font-weight:400;">2500</div>
<div class="t" style="left:2170px;top:200.78px;font-size:10.3px;color:#d4d4d4;font-weight:400;">2600</div>
<div class="t" style="left:2220px;top:200.78px;font-size:10.3px;color:#d4d4d4;font-weight:400;">2700</div>
<div class="t" style="left:2270px;top:200.78px;font-size:10.3px;color:#d4d4d4;font-weight:400;">2800</div>
<svg class="a" style="left:326px;top:201px;" width="16" height="15" viewBox="0 0 16 15"><path d="M3 9h12M9 3v12" stroke="#aaa" stroke-width="1"/></svg>
<div class="a" style="left:326px;top:216px;width:15px;height:769px;background:#050505;"></div>
<svg class="a" style="left:326px;top:216px;" width="16" height="769" viewBox="0 0 16 769"><path d="M10 2.5H15 M8 7.5H15 M10 12.5H15 M10 17.5H15 M10 22.5H15 M10 27.5H15 M0 32.5H15 M10 37.5H15 M10 42.5H15 M10 47.5H15 M10 52.5H15 M8 57.5H15 M10 62.5H15 M10 67.5H15 M10 72.5H15 M10 77.5H15 M0 82.5H15 M10 87.5H15 M10 92.5H15 M10 97.5H15 M10 102.5H15 M8 107.5H15 M10 112.5H15 M10 117.5H15 M10 122.5H15 M10 127.5H15 M0 132.5H15 M10 137.5H15 M10 142.5H15 M10 147.5H15 M10 152.5H15 M8 157.5H15 M10 162.5H15 M10 167.5H15 M10 172.5H15 M10 177.5H15 M0 182.5H15 M10 187.5H15 M10 192.5H15 M10 197.5H15 M10 202.5H15 M8 207.5H15 M10 212.5H15 M10 217.5H15 M10 222.5H15 M10 227.5H15 M0 232.5H15 M10 237.5H15 M10 242.5H15 M10 247.5H15 M10 252.5H15 M8 257.5H15 M10 262.5H15 M10 267.5H15 M10 272.5H15 M10 277.5H15 M0 282.5H15 M10 287.5H15 M10 292.5H15 M10 297.5H15 M10 302.5H15 M8 307.5H15 M10 312.5H15 M10 317.5H15 M10 322.5H15 M10 327.5H15 M0 332.5H15 M10 337.5H15 M10 342.5H15 M10 347.5H15 M10 352.5H15 M8 357.5H15 M10 362.5H15 M10 367.5H15 M10 372.5H15 M10 377.5H15 M0 382.5H15 M10 387.5H15 M10 392.5H15 M10 397.5H15 M10 402.5H15 M8 407.5H15 M10 412.5H15 M10 417.5H15 M10 422.5H15 M10 427.5H15 M0 432.5H15 M10 437.5H15 M10 442.5H15 M10 447.5H15 M10 452.5H15 M8 457.5H15 M10 462.5H15 M10 467.5H15 M10 472.5H15 M10 477.5H15 M0 482.5H15 M10 487.5H15 M10 492.5H15 M10 497.5H15 M10 502.5H15 M8 507.5H15 M10 512.5H15 M10 517.5H15 M10 522.5H15 M10 527.5H15 M0 532.5H15 M10 537.5H15 M10 542.5H15 M10 547.5H15 M10 552.5H15 M8 557.5H15 M10 562.5H15 M10 567.5H15 M10 572.5H15 M10 577.5H15 M0 582.5H15 M10 587.5H15 M10 592.5H15 M10 597.5H15 M10 602.5H15 M8 607.5H15 M10 612.5H15 M10 617.5H15 M10 622.5H15 M10 627.5H15 M0 632.5H15 M10 637.5H15 M10 642.5H15 M10 647.5H15 M10 652.5H15 M8 657.5H15 M10 662.5H15 M10 667.5H15 M10 672.5H15 M10 677.5H15 M0 682.5H15 M10 687.5H15 M10 692.5H15 M10 697.5H15 M10 702.5H15 M8 707.5H15 M10 712.5H15 M10 717.5H15 M10 722.5H15 M10 727.5H15 M0 732.5H15 M10 737.5H15 M10 742.5H15 M10 747.5H15 M10 752.5H15 M8 757.5H15 M10 762.5H15 M10 767.5H15" stroke="#d8d8d8" stroke-width="1"/><rect x="13.5" y="0" width="1.5" height="769" fill="#e8e8e8"/></svg>
<div class="t" style="left:327.5px;top:249.0px;font-size:9.5px;color:#c8c8c8">2</div>
<div class="t" style="left:327.5px;top:257.2px;font-size:9.5px;color:#c8c8c8">0</div>
<div class="t" style="left:327.5px;top:265.4px;font-size:9.5px;color:#c8c8c8">0</div>
<div class="t" style="left:327.5px;top:299.0px;font-size:9.5px;color:#c8c8c8">1</div>
<div class="t" style="left:327.5px;top:307.2px;font-size:9.5px;color:#c8c8c8">0</div>
<div class="t" style="left:327.5px;top:315.4px;font-size:9.5px;color:#c8c8c8">0</div>
<div class="t" style="left:327.5px;top:349.0px;font-size:9.5px;color:#c8c8c8">0</div>
<div class="t" style="left:327.5px;top:399.0px;font-size:9.5px;color:#c8c8c8">1</div>
<div class="t" style="left:327.5px;top:407.2px;font-size:9.5px;color:#c8c8c8">0</div>
<div class="t" style="left:327.5px;top:415.4px;font-size:9.5px;color:#c8c8c8">0</div>
<div class="t" style="left:327.5px;top:449.0px;font-size:9.5px;color:#c8c8c8">2</div>
<div class="t" style="left:327.5px;top:457.2px;font-size:9.5px;color:#c8c8c8">0</div>
<div class="t" style="left:327.5px;top:465.4px;font-size:9.5px;color:#c8c8c8">0</div>
<div class="t" style="left:327.5px;top:499.0px;font-size:9.5px;color:#c8c8c8">3</div>
<div class="t" style="left:327.5px;top:507.2px;font-size:9.5px;color:#c8c8c8">0</div>
<div class="t" style="left:327.5px;top:515.4px;font-size:9.5px;color:#c8c8c8">0</div>
<div class="t" style="left:327.5px;top:549.0px;font-size:9.5px;color:#c8c8c8">4</div>
<div class="t" style="left:327.5px;top:557.2px;font-size:9.5px;color:#c8c8c8">0</div>
<div class="t" style="left:327.5px;top:565.4px;font-size:9.5px;color:#c8c8c8">0</div>
<div class="t" style="left:327.5px;top:599.0px;font-size:9.5px;color:#c8c8c8">5</div>
<div class="t" style="left:327.5px;top:607.2px;font-size:9.5px;color:#c8c8c8">0</div>
<div class="t" style="left:327.5px;top:615.4px;font-size:9.5px;color:#c8c8c8">0</div>
<div class="t" style="left:327.5px;top:649.0px;font-size:9.5px;color:#c8c8c8">6</div>
<div class="t" style="left:327.5px;top:657.2px;font-size:9.5px;color:#c8c8c8">0</div>
<div class="t" style="left:327.5px;top:665.4px;font-size:9.5px;color:#c8c8c8">0</div>
<div class="t" style="left:327.5px;top:699.0px;font-size:9.5px;color:#c8c8c8">7</div>
<div class="t" style="left:327.5px;top:707.2px;font-size:9.5px;color:#c8c8c8">0</div>
<div class="t" style="left:327.5px;top:715.4px;font-size:9.5px;color:#c8c8c8">0</div>
<div class="t" style="left:327.5px;top:749.0px;font-size:9.5px;color:#c8c8c8">8</div>
<div class="t" style="left:327.5px;top:757.2px;font-size:9.5px;color:#c8c8c8">0</div>
<div class="t" style="left:327.5px;top:765.4px;font-size:9.5px;color:#c8c8c8">0</div>
<div class="t" style="left:327.5px;top:799.0px;font-size:9.5px;color:#c8c8c8">9</div>
<div class="t" style="left:327.5px;top:807.2px;font-size:9.5px;color:#c8c8c8">0</div>
<div class="t" style="left:327.5px;top:815.4px;font-size:9.5px;color:#c8c8c8">0</div>
<div class="t" style="left:327.5px;top:849.0px;font-size:9.5px;color:#c8c8c8">1</div>
<div class="t" style="left:327.5px;top:857.2px;font-size:9.5px;color:#c8c8c8">0</div>
<div class="t" style="left:327.5px;top:865.4px;font-size:9.5px;color:#c8c8c8">0</div>
<div class="t" style="left:327.5px;top:873.6px;font-size:9.5px;color:#c8c8c8">0</div>
<div class="t" style="left:327.5px;top:899.0px;font-size:9.5px;color:#c8c8c8">1</div>
<div class="t" style="left:327.5px;top:907.2px;font-size:9.5px;color:#c8c8c8">1</div>
<div class="t" style="left:327.5px;top:915.4px;font-size:9.5px;color:#c8c8c8">0</div>
<div class="t" style="left:327.5px;top:923.6px;font-size:9.5px;color:#c8c8c8">0</div>
<div class="t" style="left:327.5px;top:949.0px;font-size:9.5px;color:#c8c8c8">1</div>
<div class="t" style="left:327.5px;top:957.2px;font-size:9.5px;color:#c8c8c8">2</div>
<div class="t" style="left:327.5px;top:965.4px;font-size:9.5px;color:#c8c8c8">0</div>
<div class="t" style="left:327.5px;top:973.6px;font-size:9.5px;color:#c8c8c8">0</div>
<div class="a" style="left:633px;top:216px;width:1px;height:769px;background:#5a5a5a;"></div>
<div class="a" style="left:2072px;top:216px;width:1px;height:769px;background:#5a5a5a;"></div>
<div class="t" style="left:351px;top:223.02px;font-size:11.2px;color:#d8d8d8;font-weight:700;">Active Camera</div>
<div class="a" style="left:1944px;top:570px;width:190px;height:103px;background:transparent;border:1px solid #4c4c4c"></div>
<svg class="a" style="left:868px;top:348px;" width="960" height="540" viewBox="0 0 960 540">
<defs>
<linearGradient id="pg" x1="0" y1="0" x2="0" y2="1"><stop offset="0" stop-color="#eaeae9"/><stop offset="1" stop-color="#e6e6e5"/></linearGradient>
<radialGradient id="sh" cx="0.5" cy="0.5" r="0.5"><stop offset="0" stop-color="#000" stop-opacity="0.30"/><stop offset="0.6" stop-color="#000" stop-opacity="0.12"/><stop offset="1" stop-color="#000" stop-opacity="0"/></radialGradient>
<pattern id="st" width="7" height="4" patternUnits="userSpaceOnUse" patternTransform="rotate(-12)"><rect width="7" height="4" fill="#a8a8a8"/><rect y="0" width="7" height="1.5" fill="#555"/></pattern>
<pattern id="stb" width="7" height="4" patternUnits="userSpaceOnUse" patternTransform="rotate(4)"><rect width="7" height="4" fill="#a4a4a4"/><rect y="0" width="7" height="1.4" fill="#606060"/></pattern>
<pattern id="st2" width="5" height="5" patternUnits="userSpaceOnUse" patternTransform="rotate(65)"><rect width="5" height="5" fill="#c4c4c4"/><rect width="1.8" height="5" fill="#606060"/></pattern>
<filter id="bl" x="-0.5" y="-2" width="2" height="5"><feGaussianBlur stdDeviation="6"/></filter>
</defs>
<rect width="960" height="540" fill="url(#pg)"/>
<rect x="0" y="474" width="312" height="66" fill="#eaeae9"/>
<ellipse cx="486" cy="479" rx="100" ry="9" fill="#000" opacity="0.2" filter="url(#bl)"/>
<path d="M450.4 143.2L478.2 145.2Q480 163 496.7 163.8Q508 163 509.9 148.5L534.4 149.2Q530 180 491.3 182.5Q455 180 450.4 143.2Z" fill="url(#st)"/>
<path d="M450.4 143.2L478.2 145.2Q480 163 496.7 163.8L503.3 163.1L496.7 182.3Q491 182.5 488 182.2Q455 178 450.4 143.2Z" fill="#141414"/>
<circle cx="491" cy="196.8" r="15.9" fill="url(#st)"/>
<path d="M435.2 208.1L518.5 210L518.5 227.3L445 226.6Z" fill="url(#st)"/>
<path d="M480.8 226.6L518.5 227.3L520 250L524.5 266L521 284.2L486 284.2L476 262Z" fill="#d6d6d6"/>
<path d="M486 264L515 268L524.5 278L521 284.2L486 284.2Z" fill="#7a7a7a"/>
<path d="M499 247L511 246" stroke="#555" stroke-width="1.2"/><path d="M486 230Q500 236 519 232" stroke="#999" stroke-width="2" fill="none"/>
<path d="M444.4 226.6L480.8 226.6Q486 240 483.5 263L454.3 261.7L444.4 253Z" fill="#0e0e0e"/>
<ellipse cx="467.6" cy="259" rx="11" ry="15" fill="#bdbdbd"/>
<ellipse cx="470" cy="262" rx="3" ry="6" fill="#8a8a8a"/>
<path d="M451.7 274.9L520 278L523 300L512 305L445 318L438.5 316Z" fill="#111"/>
<path d="M476 281L512 284L523 300L512 305L476 311Z" fill="url(#st)"/>
<path d="M478 281h32M478 285h34M478 289h35" stroke="#111" stroke-width="1.6"/>
<path d="M421.3 322.4L443.8 317.8L523.2 317.8L547.6 385.3L424.6 389.9Z" fill="url(#stb)"/>
<path d="M421.3 322.4L443.8 317.8L455 330L450 360L440 365Z" fill="#555"/>
<rect x="455.7" y="388.6" width="28.4" height="57" fill="#2a2a2a"/>
<rect x="486.8" y="388" width="31.1" height="58" fill="#2a2a2a"/>
<path d="M458 410L484 392L484 425L460 420Z" fill="#8a8a8a"/>
<path d="M489 410L517 392L517 425L491 420Z" fill="#8a8a8a"/>
<rect x="455.7" y="389" width="14" height="12" fill="url(#st)"/>
<rect x="486.8" y="389" width="14" height="12" fill="url(#st)"/>
<rect x="451.7" y="448.1" width="32.5" height="21" fill="url(#st2)"/>
<rect x="486" y="450" width="33.8" height="20" fill="url(#st2)"/>
<path d="M632.4 362.3L652.7 351.3L661.2 354.1L686.5 336.6L696.3 342.9L701.9 343.6L711.7 345L738.4 361.9L746.9 362.3Z" fill="#383838"/>
<path d="M688.6 340.1L696.3 342.2L699.8 344.3L696.3 361.9L689.3 361.9Z" fill="#a8a8a8"/>
<path d="M770.8 362.3L777.8 352.7L784.8 347.8L793.2 349.2L807.3 347.1L821.3 338L850.8 328.9L881.7 354.1L888.8 351.3L900 349.2L917.6 347.8L938.6 362.3Z" fill="#323232"/>
<path d="M786.2 347.8L807.3 345.7L794.6 354.1L787.6 362.3L782 362.3Z" fill="#a0a0a0"/>
<path d="M886 352.7L900 349.2L917.6 347.8L929.5 354.1L914 362.3L887.4 362.3Z" fill="#a4a4a4"/>
</svg>
<div class="a" style="left:864px;top:344px;width:8px;height:8px;background:#acacd6;border:1px solid #222"></div>
<div class="a" style="left:864px;top:614px;width:8px;height:8px;background:#acacd6;border:1px solid #222"></div>
<div class="a" style="left:864px;top:884px;width:8px;height:8px;background:#acacd6;border:1px solid #222"></div>
<div class="a" style="left:1344px;top:344px;width:8px;height:8px;background:#acacd6;border:1px solid #222"></div>
<div class="a" style="left:1344px;top:884px;width:8px;height:8px;background:#acacd6;border:1px solid #222"></div>
<div class="a" style="left:1824px;top:344px;width:8px;height:8px;background:#acacd6;border:1px solid #222"></div>
<div class="a" style="left:1824px;top:614px;width:8px;height:8px;background:#acacd6;border:1px solid #222"></div>
<div class="a" style="left:1824px;top:884px;width:8px;height:8px;background:#acacd6;border:1px solid #222"></div>
<div class="a" style="left:326px;top:985px;width:1986px;height:2px;background:#141414;"></div>
<div class="a" style="left:326px;top:987px;width:1986px;height:22px;background:#1f1f1f;"></div>
<svg class="a" style="left:329px;top:990px;" width="17" height="15" viewBox="0 0 17 15"><rect x="4" y="4" width="12" height="10" fill="#555" stroke="#9a9a9a"/><rect x="1" y="1" width="12" height="10" fill="#777" stroke="#9a9a9a"/><path d="M5 3l5 3-5 3z" fill="#eee"/></svg>
<svg class="a" style="left:352px;top:990px;" width="15" height="15" viewBox="0 0 15 15"><rect x="1" y="1" width="13" height="10" fill="#6a6a6a" stroke="#9a9a9a"/><rect x="4" y="12" width="7" height="2" fill="#9a9a9a"/></svg>
<div class="t" style="left:377px;top:992.18px;font-size:11.6px;color:#d0d0d0;font-weight:700;">50%</div>
<svg class="a" style="left:427px;top:993px;" width="9" height="6" viewBox="0 0 9 6"><path d="M0 0h9L4.5 6z" fill="#d8d8d8"/></svg>
<svg class="a" style="left:695px;top:993px;" width="9" height="6" viewBox="0 0 9 6"><path d="M0 0h9L4.5 6z" fill="#d8d8d8"/></svg>
<svg class="a" style="left:847px;top:993px;" width="9" height="6" viewBox="0 0 9 6"><path d="M0 0h9L4.5 6z" fill="#d8d8d8"/></svg>
<svg class="a" style="left:921px;top:993px;" width="9" height="6" viewBox="0 0 9 6"><path d="M0 0h9L4.5 6z" fill="#d8d8d8"/></svg>
<svg class="a" style="left:443px;top:990px;" width="16" height="15" viewBox="0 0 16 15"><rect x="2" y="3" width="12" height="9" fill="none" stroke="#9a9a9a" stroke-width="1.2"/><path d="M8 1v13M0 7.5h16" stroke="#9a9a9a" stroke-width="1"/></svg>
<svg class="a" style="left:465px;top:990px;" width="16" height="15" viewBox="0 0 16 15"><path d="M2 13L5 3H14V13Z" fill="none" stroke="#3a8ed4" stroke-width="1.2" stroke-dasharray="2 1"/></svg>
<div class="t" style="left:489px;top:992.01px;font-size:11.8px;color:#d8d8d8;font-weight:400;">0:00:00:00</div>
<svg class="a" style="left:557px;top:991px;" width="16" height="13" viewBox="0 0 16 13"><rect x="1" y="3" width="14" height="9" fill="#9a9a9a"/><rect x="5" y="1" width="6" height="3" fill="#9a9a9a"/><circle cx="8" cy="7.5" r="2.5" fill="#1f1f1f"/></svg>
<svg class="a" style="left:579px;top:990px;" width="17" height="15" viewBox="0 0 17 15"><circle cx="6" cy="10" r="4" fill="none" stroke="#666" stroke-width="1.4"/><circle cx="11" cy="5" r="4" fill="none" stroke="#666" stroke-width="1.4"/></svg>
<svg class="a" style="left:602px;top:990px;" width="17" height="16" viewBox="0 0 17 16"><circle cx="8" cy="5" r="4" fill="#c33"/><circle cx="5" cy="10" r="4" fill="#3a3"/><circle cx="11" cy="10" r="4" fill="#36c"/></svg>
<div class="t" style="left:627px;top:992.18px;font-size:11.6px;color:#d0d0d0;font-weight:700;">Full</div>
<svg class="a" style="left:711px;top:990px;" width="15" height="15" viewBox="0 0 15 15"><rect x="1" y="1" width="13" height="13" fill="none" stroke="#9a9a9a"/><rect x="4" y="4" width="7" height="7" fill="none" stroke="#9a9a9a"/></svg>
<svg class="a" style="left:733px;top:990px;" width="15" height="15" viewBox="0 0 15 15"><path d="M0 0h5v5H0zM10 0h5v5h-5zM5 5h5v5H5zM0 10h5v5H0zM10 10h5v5h-5z" fill="#8a8a8a"/><path d="M5 0h5v5H5zM0 5h5v5H0zM10 5h5v5h-5zM5 10h5v5H5z" fill="#555"/></svg>
<div class="t" style="left:760px;top:992.01px;font-size:11.8px;color:#d0d0d0;font-weight:700;">Active Camera</div>
<div class="t" style="left:870px;top:992.01px;font-size:11.8px;color:#d0d0d0;font-weight:700;">1 View</div>
<svg class="a" style="left:937px;top:990px;" width="15" height="15" viewBox="0 0 15 15"><path d="M1 3h13M1 12h13" stroke="#9a9a9a" stroke-width="1.5"/><rect x="3" y="5" width="9" height="5" fill="#9a9a9a"/></svg>
<div class="a" style="left:954px;top:989px;width:22px;height:19px;background:#0c0c0c;"></div>
<svg class="a" style="left:958px;top:990px;" width="15" height="15" viewBox="0 0 15 15"><rect x="1" y="1" width="13" height="13" fill="none" stroke="#9a9a9a"/><path d="M8 3L5 8h3l-1 4 4-6H8z" fill="#9a9a9a"/></svg>
<svg class="a" style="left:980px;top:990px;" width="16" height="15" viewBox="0 0 16 15"><rect x="1" y="4" width="14" height="10" fill="none" stroke="#9a9a9a"/><path d="M5 4v10M11 4v10M4 1h8" stroke="#9a9a9a"/></svg>
<svg class="a" style="left:1003px;top:990px;" width="15" height="15" viewBox="0 0 15 15"><rect x="5" y="0" width="5" height="4" fill="#9a9a9a"/><path d="M7.5 4v3M2 7h11M2 7v3M13 7v3" stroke="#9a9a9a"/><rect x="0" y="10" width="5" height="5" fill="#9a9a9a"/><rect x="10" y="10" width="5" height="5" fill="#9a9a9a"/></svg>
<svg class="a" style="left:1027px;top:990px;" width="16" height="16" viewBox="0 0 16 16"><circle cx="8" cy="8" r="7" fill="#8a8a8a"/><circle cx="8" cy="8" r="3.5" fill="#333"/></svg>
<div class="t" style="left:1055px;top:992.01px;font-size:11.8px;color:#2f7fc0;font-weight:400;">+0.0</div>
<!-- p4_right -->
<div class="a" style="left:2316px;top:148px;width:222px;height:861px;background:#1c1c1c;"></div>
<div class="a" style="left:2521px;top:148px;width:17px;height:861px;background:#1a1a1a;"></div>
<div class="a" style="left:2317px;top:149px;width:204px;height:26px;background:#1e1e1e;"></div>
<div class="a" style="left:2317px;top:175px;width:204px;height:2px;background:#0a0a0a;"></div>
<div class="t" style="left:2328px;top:156.82px;font-size:11.2px;color:#c4c4c4;font-weight:400;">Info</div>
<div class="a" style="left:2317px;top:177px;width:204px;height:28px;background:#1e1e1e;"></div>
<div class="a" style="left:2317px;top:205px;width:204px;height:2px;background:#0a0a0a;"></div>
<div class="t" style="left:2328px;top:185.82px;font-size:11.2px;color:#c4c4c4;font-weight:400;">Audio</div>
<div class="a" style="left:2317px;top:207px;width:204px;height:28px;background:#1e1e1e;"></div>
<div class="a" style="left:2317px;top:235px;width:204px;height:2px;background:#0a0a0a;"></div>
<div class="t" style="left:2328px;top:215.82px;font-size:11.2px;color:#c4c4c4;font-weight:400;">Preview</div>
<div class="a" style="left:2317px;top:237px;width:204px;height:191px;background:#232323;"></div>
<div class="a" style="left:2317px;top:237px;width:204px;height:28px;background:#262626;"></div>
<div class="t" style="left:2328px;top:246.44px;font-size:10.7px;color:#dcdcdc;font-weight:700;">Effects &amp; Presets</div>
<svg class="a" style="left:2502px;top:246px;" width="9" height="10" viewBox="0 0 9 10"><path d="M1 1.5h7M1 4.5h7M1 7.5h7" stroke="#9a9a9a" stroke-width="1.3"/></svg>
<div class="a" style="left:2317px;top:269px;width:204px;height:20px;background:#1a1a1a;"></div>
<svg class="a" style="left:2324px;top:272px;" width="16" height="16" viewBox="0 0 16 16"><circle cx="9.5" cy="6" r="4.5" fill="none" stroke="#3a96dc" stroke-width="1.8"/><path d="M6 9.5l-4.5 4.5" stroke="#3a96dc" stroke-width="2.2"/></svg>
<div class="t" style="left:2355px;top:273.34px;font-size:12px;color:#e0e0e0;font-weight:400;">hue</div>
<svg class="a" style="left:2503px;top:273px;" width="11" height="11" viewBox="0 0 11 11"><path d="M1 1l9 9M10 1l-9 9" stroke="#cfcfcf" stroke-width="1.5"/></svg>
<div class="a" style="left:2317px;top:289px;width:204px;height:1px;background:#111;"></div>
<svg class="a" style="left:2321px;top:295px;" width="9" height="8" viewBox="0 0 9 8"><path d="M0 0h9l-4.5 8z" fill="#cfcfcf"/></svg>
<div class="t" style="left:2334px;top:293.28px;font-size:11.6px;color:#bdbdbd;font-weight:400;">* Animation Presets</div>
<div class="a" style="left:2317px;top:307px;width:204px;height:1px;background:#252525;"></div>
<svg class="a" style="left:2338px;top:312px;" width="9" height="8" viewBox="0 0 9 8"><path d="M0 0h9l-4.5 8z" fill="#cfcfcf"/></svg>
<svg class="a" style="left:2349px;top:309px;" width="15" height="13" viewBox="0 0 15 13"><path d="M1 2h4l2 2h7v8H1z" fill="#bdbdbd"/></svg>
<div class="t" style="left:2367px;top:310.33px;font-size:11.6px;color:#bdbdbd;font-weight:400;">Text</div>
<div class="a" style="left:2317px;top:324px;width:204px;height:1px;background:#252525;"></div>
<svg class="a" style="left:2355px;top:329px;" width="9" height="8" viewBox="0 0 9 8"><path d="M0 0h9l-4.5 8z" fill="#cfcfcf"/></svg>
<svg class="a" style="left:2366px;top:326px;" width="15" height="13" viewBox="0 0 15 13"><path d="M1 2h4l2 2h7v8H1z" fill="#bdbdbd"/></svg>
<div class="t" style="left:2384px;top:327.38px;font-size:11.6px;color:#bdbdbd;font-weight:400;">Fill and Stroke</div>
<div class="a" style="left:2317px;top:341px;width:204px;height:1px;background:#252525;"></div>
<svg class="a" style="left:2384px;top:342px;" width="15" height="16" viewBox="0 0 15 16"><path d="M3 2h7l3 3v10H3z" fill="#ddd"/><rect x="4" y="8" width="8" height="6" fill="#333"/></svg>
<div class="t" style="left:2403px;top:344.43px;font-size:11.6px;color:#bdbdbd;font-weight:400;">Rotate Hue</div>
<div class="a" style="left:2317px;top:358px;width:204px;height:1px;background:#252525;"></div>
<svg class="a" style="left:2321px;top:363px;" width="9" height="8" viewBox="0 0 9 8"><path d="M0 0h9l-4.5 8z" fill="#cfcfcf"/></svg>
<div class="t" style="left:2332px;top:361.48px;font-size:11.6px;color:#bdbdbd;font-weight:400;">Color Correction</div>
<div class="a" style="left:2317px;top:376px;width:204px;height:17px;background:#2c2c2c;"></div>
<div class="a" style="left:2317px;top:376px;width:204px;height:1px;background:#252525;"></div>
<svg class="a" style="left:2351px;top:379px;" width="13" height="12" viewBox="0 0 13 12"><rect x="0" y="2" width="13" height="10" fill="#cfcfcf"/><rect x="2" y="0" width="3" height="3" fill="#cfcfcf"/><rect x="8" y="0" width="3" height="3" fill="#cfcfcf"/><text x="6.5" y="10.5" font-size="6" text-anchor="middle" fill="#555" font-family="Liberation Sans">32</text></svg>
<div class="a" style="left:2367px;top:377px;width:89px;height:15px;background:#b4b4b4;"></div>
<div class="t" style="left:2368px;top:378.53px;font-size:11.6px;color:#151515;font-weight:400;">Hue/Saturation</div>
<div class="a" style="left:2317px;top:393px;width:204px;height:1px;background:#252525;"></div>
<svg class="a" style="left:2321px;top:398px;" width="9" height="8" viewBox="0 0 9 8"><path d="M0 0h9l-4.5 8z" fill="#cfcfcf"/></svg>
<div class="t" style="left:2332px;top:395.58px;font-size:11.6px;color:#bdbdbd;font-weight:400;">Sapphire Adjust</div>
<div class="a" style="left:2317px;top:410px;width:204px;height:1px;background:#252525;"></div>
<svg class="a" style="left:2351px;top:413px;" width="13" height="12" viewBox="0 0 13 12"><rect x="0" y="2" width="13" height="10" fill="#cfcfcf"/><rect x="2" y="0" width="3" height="3" fill="#cfcfcf"/><rect x="8" y="0" width="3" height="3" fill="#cfcfcf"/><text x="6.5" y="10.5" font-size="6" text-anchor="middle" fill="#555" font-family="Liberation Sans">32</text></svg>
<div class="t" style="left:2368px;top:412.63px;font-size:11.6px;color:#bdbdbd;font-weight:400;">S_HueSatBright</div>
<div class="a" style="left:2317px;top:428px;width:204px;height:19px;background:#282828;"></div>
<div class="a" style="left:2317px;top:427px;width:204px;height:1px;background:#111;"></div>
<svg class="a" style="left:2502px;top:430px;" width="12" height="13" viewBox="0 0 12 13"><rect x="0" y="0" width="12" height="13" fill="#c4c4c4"/><path d="M2 10v-3h3" fill="none" stroke="#555"/></svg>
<div class="a" style="left:2317px;top:447px;width:204px;height:1px;background:#0e0e0e;"></div>
<div class="a" style="left:2317px;top:448px;width:204px;height:29px;background:#1e1e1e;"></div>
<div class="a" style="left:2317px;top:477px;width:204px;height:2px;background:#0a0a0a;"></div>
<div class="t" style="left:2328px;top:457.32px;font-size:11.2px;color:#c4c4c4;font-weight:400;">Align</div>
<div class="a" style="left:2317px;top:479px;width:204px;height:28px;background:#1e1e1e;"></div>
<div class="a" style="left:2317px;top:507px;width:204px;height:2px;background:#0a0a0a;"></div>
<div class="t" style="left:2328px;top:487.82px;font-size:11.2px;color:#c4c4c4;font-weight:400;">Libraries</div>
<div class="a" style="left:2317px;top:509px;width:204px;height:27px;background:#1e1e1e;"></div>
<div class="a" style="left:2317px;top:536px;width:204px;height:2px;background:#0a0a0a;"></div>
<div class="t" style="left:2328px;top:517.32px;font-size:11.2px;color:#c4c4c4;font-weight:400;">Character</div>
<div class="a" style="left:2317px;top:538px;width:204px;height:28px;background:#1e1e1e;"></div>
<div class="a" style="left:2317px;top:566px;width:204px;height:2px;background:#0a0a0a;"></div>
<div class="t" style="left:2328px;top:546.82px;font-size:11.2px;color:#c4c4c4;font-weight:400;">Paragraph</div>
<div class="a" style="left:2317px;top:568px;width:204px;height:28px;background:#1e1e1e;"></div>
<div class="a" style="left:2317px;top:596px;width:204px;height:2px;background:#0a0a0a;"></div>
<div class="t" style="left:2328px;top:576.82px;font-size:11.2px;color:#c4c4c4;font-weight:400;">Tracker</div>
<!-- p5_timeline -->
<div class="a" style="left:2px;top:1013px;width:2536px;height:481px;background:#262626;"></div>
<div class="a" style="left:2px;top:1013px;width:2536px;height:28px;background:#1c1c1c;"></div>
<div class="a" style="left:2px;top:1013px;width:115px;height:28px;background:#232323;border:1px solid #22506e;border-bottom:none"></div>
<div class="a" style="left:117px;top:1040px;width:2420px;height:1.5px;background:#235a7c;"></div>
<svg class="a" style="left:10px;top:1022px;" width="10" height="10" viewBox="0 0 10 10"><path d="M2 2l6 6M8 2l-6 6" stroke="#9a9a9a" stroke-width="1.2"/></svg>
<div class="a" style="left:27px;top:1021px;width:11px;height:11px;background:#c2aa84;"></div>
<div class="t" style="left:48px;top:1021.51px;font-size:11.8px;color:#dcdcdc;font-weight:700;">Comp 1</div>
<svg class="a" style="left:100px;top:1022px;" width="8" height="10" viewBox="0 0 8 10"><path d="M1 1.5h6M1 4.5h6M1 7.5h6" stroke="#9a9a9a" stroke-width="1.3"/></svg>
<div class="a" style="left:145px;top:1021px;width:10px;height:11px;background:#c2aa84;"></div>
<div class="t" style="left:165px;top:1021.51px;font-size:11.8px;color:#9a9a9a;font-weight:400;">head</div>
<div class="a" style="left:246px;top:1021px;width:10px;height:11px;background:#c2aa84;"></div>
<div class="t" style="left:265.7px;top:1021.51px;font-size:11.8px;color:#9a9a9a;font-weight:400;">Pre-comp 1</div>
<div class="a" style="left:385px;top:1021px;width:10px;height:11px;background:#c2aa84;"></div>
<div class="t" style="left:405.6px;top:1021.51px;font-size:11.8px;color:#9a9a9a;font-weight:400;">Texture</div>
<div class="a" style="left:502px;top:1021px;width:10px;height:11px;background:#c2aa84;"></div>
<div class="t" style="left:521px;top:1021.51px;font-size:11.8px;color:#9a9a9a;font-weight:400;">White Solid 1 Comp 1</div>
<div class="a" style="left:692px;top:1021px;width:10px;height:11px;background:#c2aa84;"></div>
<div class="t" style="left:712.6px;top:1021.51px;font-size:11.8px;color:#9a9a9a;font-weight:400;">Pre-comp 2</div>
<div class="a" style="left:832px;top:1021px;width:10px;height:11px;background:#c2aa84;"></div>
<div class="t" style="left:851.8px;top:1021.51px;font-size:11.8px;color:#9a9a9a;font-weight:400;">Noise treatment</div>
<div class="a" style="left:217px;top:1016px;width:1px;height:22px;background:#171717;"></div>
<div class="a" style="left:356px;top:1016px;width:1px;height:22px;background:#171717;"></div>
<div class="a" style="left:474px;top:1016px;width:1px;height:22px;background:#171717;"></div>
<div class="a" style="left:664px;top:1016px;width:1px;height:22px;background:#171717;"></div>
<div class="a" style="left:805px;top:1016px;width:1px;height:22px;background:#171717;"></div>
<div class="a" style="left:2px;top:1041px;width:1px;height:453px;background:#1f4560;"></div>
<div class="a" style="left:2536px;top:1041px;width:1px;height:453px;background:#1f4560;"></div>
<div class="a" style="left:2px;top:1493px;width:2535px;height:1px;background:#1f4560;"></div>
<div class="t" style="left:15px;top:1044.70px;font-size:16.3px;color:#3a94d8;font-weight:700;">0:00:00:00</div>
<div class="t" style="left:12px;top:1062.19px;font-size:11px;color:#2f7fc0;font-weight:400;">00000 (24.00 fps)</div>
<svg class="a" style="left:116px;top:1045px;" width="20" height="16" viewBox="0 0 20 16"><circle cx="8" cy="6" r="4.5" fill="none" stroke="#bdbdbd" stroke-width="1.4"/><path d="M5 9l-4 5" stroke="#bdbdbd" stroke-width="1.6"/><path d="M13 11h5l-2.5 3z" fill="#bdbdbd"/></svg>
<div class="a" style="left:145px;top:1046px;width:455px;height:24px;background:#232323;"></div>
<svg class="a" style="left:614px;top:1051.5px;" width="19" height="16" viewBox="0 0 19 16"><path d="M1 5h10M5 5v7h6M11 2v6M14 9v6" stroke="#a8a8a8" stroke-width="1.6"/></svg>
<svg class="a" style="left:648px;top:1048.5px;" width="19" height="19" viewBox="0 0 19 19"><path d="M3 1l1 3 3 1-3 1-1 3-1-3-3-1 3-1z" fill="#a8a8a8"/><path d="M10 7l6 3v6l-6 3-6-3v-6z" fill="none" stroke="#a8a8a8" stroke-width="1.4"/></svg>
<svg class="a" style="left:682px;top:1049.5px;" width="19" height="16" viewBox="0 0 19 16"><path d="M3 10a6.5 6.5 0 0 1 13 0z" fill="#a8a8a8"/><rect x="1" y="11" width="17" height="4" fill="#a8a8a8"/></svg>
<svg class="a" style="left:709px;top:1048.5px;" width="17" height="17" viewBox="0 0 17 17"><rect x="1" y="2" width="15" height="13" fill="none" stroke="#a8a8a8" stroke-width="1.4"/><rect x="5" y="1" width="7" height="15" fill="#a8a8a8"/></svg>
<svg class="a" style="left:735px;top:1048.5px;" width="18" height="17" viewBox="0 0 18 17"><circle cx="7" cy="10" r="5.5" fill="none" stroke="#a8a8a8" stroke-width="1.6"/><circle cx="11" cy="7" r="5.5" fill="#a8a8a8" opacity="0.7"/></svg>
<svg class="a" style="left:769px;top:1047.5px;" width="18" height="18" viewBox="0 0 18 18"><rect x="1" y="3" width="16" height="14" fill="none" stroke="#a8a8a8" stroke-width="1.5"/><path d="M4 1v4M14 1v4M3 14l5-5 3 3 5-5" fill="none" stroke="#a8a8a8" stroke-width="1.4"/></svg>
<div class="a" style="left:3px;top:1077px;width:801px;height:1px;background:#151515;"></div>
<div class="a" style="left:3px;top:1078px;width:801px;height:17px;background:#2c2c2c;"></div>
<svg class="a" style="left:6px;top:1080px;" width="70" height="14" viewBox="0 0 70 14"><ellipse cx="7" cy="7" rx="6" ry="4" fill="none" stroke="#9a9a9a" stroke-width="1.4"/><circle cx="7" cy="7" r="2" fill="#9a9a9a"/><path d="M22 5h2l4-3v10l-4-3h-2z" fill="#9a9a9a"/><circle cx="41" cy="7" r="3.2" fill="#bbb"/><rect x="51" y="6" width="8" height="7" fill="#bbb"/><path d="M53 6V4a2 2 0 0 1 4 0v2" fill="none" stroke="#bbb" stroke-width="1.3"/></svg>
<svg class="a" style="left:84px;top:1080px;" width="14" height="14" viewBox="0 0 14 14"><path d="M2 7l6-6h5v5l-6 6z" fill="#bbb"/><circle cx="10" cy="4" r="1.2" fill="#2c2c2c"/></svg>
<div class="t" style="left:106px;top:1082.46px;font-size:9.5px;color:#888;font-weight:400;">#</div>
<div class="t" style="left:140px;top:1082.46px;font-size:9.5px;color:#8a8a8a;font-weight:400;">Layer Name</div>
<div class="t" style="left:509px;top:1082.46px;font-size:9.5px;color:#8a8a8a;font-weight:400;">Mode</div>
<div class="t" style="left:585px;top:1082.46px;font-size:9.5px;color:#8a8a8a;font-weight:400;">T</div>
<div class="t" style="left:602px;top:1082.46px;font-size:9.5px;color:#8a8a8a;font-weight:400;">TrkMat</div>
<div class="t" style="left:675px;top:1082.46px;font-size:9.5px;color:#8a8a8a;font-weight:400;">Parent</div>
<div class="a" style="left:72px;top:1081px;width:1px;height:11px;background:#1c1c1c;"></div>
<div class="a" style="left:100px;top:1081px;width:1px;height:11px;background:#1c1c1c;"></div>
<div class="a" style="left:133px;top:1081px;width:1px;height:11px;background:#1c1c1c;"></div>
<div class="a" style="left:503px;top:1081px;width:1px;height:11px;background:#1c1c1c;"></div>
<div class="a" style="left:578px;top:1081px;width:1px;height:11px;background:#1c1c1c;"></div>
<div class="a" style="left:670px;top:1081px;width:1px;height:11px;background:#1c1c1c;"></div>
<div class="a" style="left:787px;top:1081px;width:1px;height:11px;background:#1c1c1c;"></div>
<div class="a" style="left:3px;top:1095px;width:801px;height:1px;background:#151515;"></div>
<div class="a" style="left:3px;top:1096px;width:801px;height:17px;background:#262626;"></div>
<div class="a" style="left:3px;top:1112px;width:801px;height:1px;background:#2e2e2e;"></div>
<svg class="a" style="left:6px;top:1099px;" width="14" height="11" viewBox="0 0 14 11"><ellipse cx="7" cy="5.5" rx="6" ry="4" fill="none" stroke="#bdbdbd" stroke-width="1.3"/><circle cx="7" cy="5.5" r="2" fill="#bdbdbd"/></svg>
<div class="a" style="left:36px;top:1097px;width:13px;height:15px;background:#161616;"></div>
<div class="a" style="left:51px;top:1097px;width:13px;height:15px;background:#161616;"></div>
<svg class="a" style="left:74px;top:1100px;" width="9" height="10" viewBox="0 0 9 10"><path d="M1 0l8 5-8 5z" fill="#d0d0d0"/></svg>
<div class="a" style="left:87px;top:1099px;width:12px;height:12px;background:#b4b4dc;"></div>
<div class="t" style="left:108px;top:1099.27px;font-size:11.5px;color:#c4c4c4;font-weight:400;">1</div>
<svg class="a" style="left:136px;top:1097px;" width="15" height="15" viewBox="0 0 15 15"><rect x="0" y="1" width="12" height="4" fill="#3aa0e0"/><rect x="4" y="6" width="10" height="8" fill="#102a45"/><text x="9" y="12.5" font-size="6" text-anchor="middle" fill="#5ab4f0" font-family="Liberation Sans">Ps</text></svg>
<div class="t" style="left:156px;top:1098.84px;font-size:12px;color:#b2b2b2;font-weight:700;">Noise 01</div>
<div class="a" style="left:507px;top:1096px;width:68px;height:16px;background:#1e1e1e;"></div>
<div class="t" style="left:512.7px;top:1099.18px;font-size:11.6px;color:#d4d4d4;font-weight:400;">Overlay</div>
<svg class="a" style="left:564px;top:1101px;" width="9" height="6" viewBox="0 0 9 6"><path d="M0 0h9L4.5 6z" fill="#dcdcdc"/></svg>
<div class="a" style="left:581px;top:1097px;width:12px;height:15px;background:#161616;"></div>
<svg class="a" style="left:674px;top:1098px;" width="13" height="13" viewBox="0 0 13 13"><path d="M6.5 6.5m-1.5 0a1.5 1.5 0 1 0 3 0a3 3 0 1 0-6 0a4.5 4.5 0 1 0 9 0" fill="none" stroke="#bdbdbd" stroke-width="1.1"/></svg>
<div class="a" style="left:692px;top:1096px;width:90px;height:16px;background:#1e1e1e;"></div>
<div class="t" style="left:699px;top:1099.18px;font-size:11.6px;color:#d4d4d4;font-weight:400;">None</div>
<svg class="a" style="left:768px;top:1101px;" width="9" height="6" viewBox="0 0 9 6"><path d="M0 0h9L4.5 6z" fill="#dcdcdc"/></svg>
<div class="a" style="left:811px;top:1096px;width:1709px;height:15px;background:#737284;"></div>
<div class="a" style="left:811px;top:1111px;width:1709px;height:2px;background:#363638;"></div>
<div class="a" style="left:811px;top:1097px;width:12px;height:14px;background:rgba(255,255,255,0.08);"></div>
<div class="a" style="left:3px;top:1113px;width:801px;height:17px;background:#353535;"></div>
<div class="a" style="left:3px;top:1129px;width:801px;height:1px;background:#2a2a2a;"></div>
<svg class="a" style="left:6px;top:1116px;" width="14" height="11" viewBox="0 0 14 11"><ellipse cx="7" cy="5.5" rx="6" ry="4" fill="none" stroke="#bdbdbd" stroke-width="1.3"/><circle cx="7" cy="5.5" r="2" fill="#bdbdbd"/></svg>
<div class="a" style="left:36px;top:1114px;width:13px;height:15px;background:#161616;"></div>
<div class="a" style="left:51px;top:1114px;width:13px;height:15px;background:#161616;"></div>
<svg class="a" style="left:74px;top:1117px;" width="9" height="10" viewBox="0 0 9 10"><path d="M1 0l8 5-8 5z" fill="#d0d0d0"/></svg>
<div class="a" style="left:87px;top:1116px;width:12px;height:12px;background:#b4b4dc;"></div>
<div class="t" style="left:108px;top:1116.27px;font-size:11.5px;color:#c4c4c4;font-weight:400;">2</div>
<div class="a" style="left:137px;top:1115px;width:13px;height:13px;background:#f4f4f4;border:1px solid #444"></div>
<div class="a" style="left:153px;top:1114px;width:349px;height:15px;background:linear-gradient(#b2b2b2,#a6a6a6);"></div>
<div class="t" style="left:156px;top:1115.84px;font-size:12px;color:#121212;font-weight:700;">[Adjustment Layer 4]</div>
<div class="a" style="left:507px;top:1113px;width:68px;height:16px;background:#1e1e1e;"></div>
<div class="t" style="left:512.7px;top:1116.18px;font-size:11.6px;color:#d4d4d4;font-weight:400;">Normal</div>
<svg class="a" style="left:564px;top:1118px;" width="9" height="6" viewBox="0 0 9 6"><path d="M0 0h9L4.5 6z" fill="#dcdcdc"/></svg>
<div class="a" style="left:581px;top:1114px;width:12px;height:15px;background:#161616;"></div>
<div class="a" style="left:599px;top:1113px;width:66px;height:16px;background:#1e1e1e;"></div>
<div class="t" style="left:606px;top:1116.18px;font-size:11.6px;color:#d4d4d4;font-weight:400;">None</div>
<svg class="a" style="left:652px;top:1118px;" width="9" height="6" viewBox="0 0 9 6"><path d="M0 0h9L4.5 6z" fill="#dcdcdc"/></svg>
<svg class="a" style="left:674px;top:1115px;" width="13" height="13" viewBox="0 0 13 13"><path d="M6.5 6.5m-1.5 0a1.5 1.5 0 1 0 3 0a3 3 0 1 0-6 0a4.5 4.5 0 1 0 9 0" fill="none" stroke="#bdbdbd" stroke-width="1.1"/></svg>
<div class="a" style="left:692px;top:1113px;width:90px;height:16px;background:#1e1e1e;"></div>
<div class="t" style="left:699px;top:1116.18px;font-size:11.6px;color:#d4d4d4;font-weight:400;">None</div>
<svg class="a" style="left:768px;top:1118px;" width="9" height="6" viewBox="0 0 9 6"><path d="M0 0h9L4.5 6z" fill="#dcdcdc"/></svg>
<div class="a" style="left:811px;top:1113px;width:1709px;height:15px;background:#9c9cc0;"></div>
<div class="a" style="left:811px;top:1113px;width:1709px;height:1px;background:#c8c8e0;"></div>
<div class="a" style="left:811px;top:1128px;width:1709px;height:2px;background:#363638;"></div>
<div class="a" style="left:811px;top:1114px;width:12px;height:14px;background:rgba(255,255,255,0.08);"></div>
<div class="a" style="left:3px;top:1130px;width:801px;height:17px;background:#353535;"></div>
<div class="a" style="left:3px;top:1146px;width:801px;height:1px;background:#2a2a2a;"></div>
<svg class="a" style="left:6px;top:1133px;" width="14" height="11" viewBox="0 0 14 11"><ellipse cx="7" cy="5.5" rx="6" ry="4" fill="none" stroke="#bdbdbd" stroke-width="1.3"/><circle cx="7" cy="5.5" r="2" fill="#bdbdbd"/></svg>
<div class="a" style="left:36px;top:1131px;width:13px;height:15px;background:#161616;"></div>
<div class="a" style="left:51px;top:1131px;width:13px;height:15px;background:#161616;"></div>
<svg class="a" style="left:74px;top:1134px;" width="9" height="10" viewBox="0 0 9 10"><path d="M1 0l8 5-8 5z" fill="#d0d0d0"/></svg>
<div class="a" style="left:87px;top:1133px;width:12px;height:12px;background:#b4b4dc;"></div>
<div class="t" style="left:108px;top:1133.27px;font-size:11.5px;color:#c4c4c4;font-weight:400;">3</div>
<svg class="a" style="left:136px;top:1131px;" width="15" height="15" viewBox="0 0 15 15"><rect x="0" y="1" width="12" height="4" fill="#3aa0e0"/><rect x="4" y="6" width="10" height="8" fill="#102a45"/><text x="9" y="12.5" font-size="6" text-anchor="middle" fill="#5ab4f0" font-family="Liberation Sans">Ps</text></svg>
<div class="a" style="left:153px;top:1131px;width:349px;height:15px;background:linear-gradient(#b2b2b2,#a6a6a6);"></div>
<div class="t" style="left:156px;top:1132.84px;font-size:12px;color:#121212;font-weight:700;">Noise 03</div>
<div class="a" style="left:507px;top:1130px;width:68px;height:16px;background:#1e1e1e;"></div>
<div class="t" style="left:512.7px;top:1133.18px;font-size:11.6px;color:#d4d4d4;font-weight:400;">Overlay</div>
<svg class="a" style="left:564px;top:1135px;" width="9" height="6" viewBox="0 0 9 6"><path d="M0 0h9L4.5 6z" fill="#dcdcdc"/></svg>
<div class="a" style="left:581px;top:1131px;width:12px;height:15px;background:#161616;"></div>
<div class="a" style="left:599px;top:1130px;width:66px;height:16px;background:#1e1e1e;"></div>
<div class="t" style="left:606px;top:1133.18px;font-size:11.6px;color:#d4d4d4;font-weight:400;">None</div>
<svg class="a" style="left:652px;top:1135px;" width="9" height="6" viewBox="0 0 9 6"><path d="M0 0h9L4.5 6z" fill="#dcdcdc"/></svg>
<svg class="a" style="left:674px;top:1132px;" width="13" height="13" viewBox="0 0 13 13"><path d="M6.5 6.5m-1.5 0a1.5 1.5 0 1 0 3 0a3 3 0 1 0-6 0a4.5 4.5 0 1 0 9 0" fill="none" stroke="#bdbdbd" stroke-width="1.1"/></svg>
<div class="a" style="left:692px;top:1130px;width:90px;height:16px;background:#1e1e1e;"></div>
<div class="t" style="left:699px;top:1133.18px;font-size:11.6px;color:#d4d4d4;font-weight:400;">None</div>
<svg class="a" style="left:768px;top:1135px;" width="9" height="6" viewBox="0 0 9 6"><path d="M0 0h9L4.5 6z" fill="#dcdcdc"/></svg>
<div class="a" style="left:811px;top:1130px;width:1709px;height:15px;background:#9a9abc;"></div>
<div class="a" style="left:811px;top:1130px;width:1709px;height:1px;background:#c8c8e0;"></div>
<div class="a" style="left:811px;top:1145px;width:1709px;height:2px;background:#363638;"></div>
<div class="a" style="left:811px;top:1131px;width:12px;height:14px;background:rgba(255,255,255,0.08);"></div>
<div class="a" style="left:3px;top:1147px;width:801px;height:17px;background:#262626;"></div>
<div class="a" style="left:3px;top:1163px;width:801px;height:1px;background:#2e2e2e;"></div>
<svg class="a" style="left:6px;top:1150px;" width="14" height="11" viewBox="0 0 14 11"><ellipse cx="7" cy="5.5" rx="6" ry="4" fill="none" stroke="#bdbdbd" stroke-width="1.3"/><circle cx="7" cy="5.5" r="2" fill="#bdbdbd"/></svg>
<div class="a" style="left:36px;top:1148px;width:13px;height:15px;background:#161616;"></div>
<div class="a" style="left:51px;top:1148px;width:13px;height:15px;background:#161616;"></div>
<svg class="a" style="left:74px;top:1151px;" width="9" height="10" viewBox="0 0 9 10"><path d="M1 0l8 5-8 5z" fill="#d0d0d0"/></svg>
<div class="a" style="left:87px;top:1150px;width:12px;height:12px;background:#b4b4dc;"></div>
<div class="t" style="left:108px;top:1150.27px;font-size:11.5px;color:#c4c4c4;font-weight:400;">4</div>
<svg class="a" style="left:136px;top:1148px;" width="15" height="15" viewBox="0 0 15 15"><rect x="0" y="1" width="12" height="4" fill="#3aa0e0"/><rect x="4" y="6" width="10" height="8" fill="#102a45"/><text x="9" y="12.5" font-size="6" text-anchor="middle" fill="#5ab4f0" font-family="Liberation Sans">Ps</text></svg>
<div class="t" style="left:156px;top:1149.84px;font-size:12px;color:#b2b2b2;font-weight:700;">Noise 02</div>
<div class="a" style="left:507px;top:1147px;width:68px;height:16px;background:#1e1e1e;"></div>
<div class="t" style="left:512.7px;top:1150.18px;font-size:11.6px;color:#d4d4d4;font-weight:400;">Overlay</div>
<svg class="a" style="left:564px;top:1152px;" width="9" height="6" viewBox="0 0 9 6"><path d="M0 0h9L4.5 6z" fill="#dcdcdc"/></svg>
<div class="a" style="left:581px;top:1148px;width:12px;height:15px;background:#161616;"></div>
<div class="a" style="left:599px;top:1147px;width:66px;height:16px;background:#1e1e1e;"></div>
<div class="t" style="left:606px;top:1150.18px;font-size:11.6px;color:#d4d4d4;font-weight:400;">None</div>
<svg class="a" style="left:652px;top:1152px;" width="9" height="6" viewBox="0 0 9 6"><path d="M0 0h9L4.5 6z" fill="#dcdcdc"/></svg>
<svg class="a" style="left:674px;top:1149px;" width="13" height="13" viewBox="0 0 13 13"><path d="M6.5 6.5m-1.5 0a1.5 1.5 0 1 0 3 0a3 3 0 1 0-6 0a4.5 4.5 0 1 0 9 0" fill="none" stroke="#bdbdbd" stroke-width="1.1"/></svg>
<div class="a" style="left:692px;top:1147px;width:90px;height:16px;background:#1e1e1e;"></div>
<div class="t" style="left:699px;top:1150.18px;font-size:11.6px;color:#d4d4d4;font-weight:400;">None</div>
<svg class="a" style="left:768px;top:1152px;" width="9" height="6" viewBox="0 0 9 6"><path d="M0 0h9L4.5 6z" fill="#dcdcdc"/></svg>
<div class="a" style="left:811px;top:1147px;width:1709px;height:15px;background:#75748a;"></div>
<div class="a" style="left:811px;top:1162px;width:1709px;height:2px;background:#363638;"></div>
<div class="a" style="left:811px;top:1148px;width:12px;height:14px;background:rgba(255,255,255,0.08);"></div>
<div class="a" style="left:3px;top:1164px;width:801px;height:17px;background:#262626;"></div>
<div class="a" style="left:3px;top:1180px;width:801px;height:1px;background:#2e2e2e;"></div>
<svg class="a" style="left:6px;top:1167px;" width="14" height="11" viewBox="0 0 14 11"><ellipse cx="7" cy="5.5" rx="6" ry="4" fill="none" stroke="#bdbdbd" stroke-width="1.3"/><circle cx="7" cy="5.5" r="2" fill="#bdbdbd"/></svg>
<div class="a" style="left:36px;top:1165px;width:13px;height:15px;background:#161616;"></div>
<div class="a" style="left:51px;top:1165px;width:13px;height:15px;background:#161616;"></div>
<svg class="a" style="left:74px;top:1168px;" width="9" height="10" viewBox="0 0 9 10"><path d="M1 0l8 5-8 5z" fill="#d0d0d0"/></svg>
<div class="a" style="left:87px;top:1167px;width:12px;height:12px;background:#b4b4dc;"></div>
<div class="t" style="left:108px;top:1167.27px;font-size:11.5px;color:#c4c4c4;font-weight:400;">5</div>
<div class="a" style="left:137px;top:1166px;width:13px;height:13px;background:#f4f4f4;border:1px solid #444"></div>
<div class="t" style="left:156px;top:1166.84px;font-size:12px;color:#b2b2b2;font-weight:700;">[Adjustment Layer 1]</div>
<div class="a" style="left:507px;top:1164px;width:68px;height:16px;background:#1e1e1e;"></div>
<div class="t" style="left:512.7px;top:1167.18px;font-size:11.6px;color:#d4d4d4;font-weight:400;">Normal</div>
<svg class="a" style="left:564px;top:1169px;" width="9" height="6" viewBox="0 0 9 6"><path d="M0 0h9L4.5 6z" fill="#dcdcdc"/></svg>
<div class="a" style="left:581px;top:1165px;width:12px;height:15px;background:#161616;"></div>
<div class="a" style="left:599px;top:1164px;width:66px;height:16px;background:#1e1e1e;"></div>
<div class="t" style="left:606px;top:1167.18px;font-size:11.6px;color:#d4d4d4;font-weight:400;">None</div>
<svg class="a" style="left:652px;top:1169px;" width="9" height="6" viewBox="0 0 9 6"><path d="M0 0h9L4.5 6z" fill="#dcdcdc"/></svg>
<svg class="a" style="left:674px;top:1166px;" width="13" height="13" viewBox="0 0 13 13"><path d="M6.5 6.5m-1.5 0a1.5 1.5 0 1 0 3 0a3 3 0 1 0-6 0a4.5 4.5 0 1 0 9 0" fill="none" stroke="#bdbdbd" stroke-width="1.1"/></svg>
<div class="a" style="left:692px;top:1164px;width:90px;height:16px;background:#1e1e1e;"></div>
<div class="t" style="left:699px;top:1167.18px;font-size:11.6px;color:#d4d4d4;font-weight:400;">None</div>
<svg class="a" style="left:768px;top:1169px;" width="9" height="6" viewBox="0 0 9 6"><path d="M0 0h9L4.5 6z" fill="#dcdcdc"/></svg>
<div class="a" style="left:811px;top:1164px;width:1709px;height:15px;background:#757488;"></div>
<div class="a" style="left:811px;top:1179px;width:1709px;height:2px;background:#363638;"></div>
<div class="a" style="left:811px;top:1165px;width:12px;height:14px;background:rgba(255,255,255,0.08);"></div>
<div class="a" style="left:3px;top:1181px;width:801px;height:17px;background:#262626;"></div>
<div class="a" style="left:3px;top:1197px;width:801px;height:1px;background:#2e2e2e;"></div>
<svg class="a" style="left:6px;top:1184px;" width="14" height="11" viewBox="0 0 14 11"><ellipse cx="7" cy="5.5" rx="6" ry="4" fill="none" stroke="#bdbdbd" stroke-width="1.3"/><circle cx="7" cy="5.5" r="2" fill="#bdbdbd"/></svg>
<div class="a" style="left:36px;top:1182px;width:13px;height:15px;background:#161616;"></div>
<div class="a" style="left:51px;top:1182px;width:13px;height:15px;background:#161616;"></div>
<svg class="a" style="left:74px;top:1185px;" width="9" height="10" viewBox="0 0 9 10"><path d="M1 0l8 5-8 5z" fill="#d0d0d0"/></svg>
<div class="a" style="left:87px;top:1184px;width:12px;height:12px;background:#e2b8c0;"></div>
<div class="t" style="left:108px;top:1184.27px;font-size:11.5px;color:#c4c4c4;font-weight:400;">6</div>
<svg class="a" style="left:136px;top:1183px;" width="15" height="13" viewBox="0 0 15 13"><path d="M1 5h9v6H1zM10 7l4-2v6l-4-2z" fill="#111" stroke="#aaa" stroke-width="0.6"/><circle cx="4" cy="3" r="2" fill="#ccc"/><circle cx="8" cy="3" r="2" fill="#ccc"/></svg>
<div class="t" style="left:156px;top:1183.84px;font-size:12px;color:#b2b2b2;font-weight:700;">Camera 1</div>
<svg class="a" style="left:674px;top:1183px;" width="13" height="13" viewBox="0 0 13 13"><path d="M6.5 6.5m-1.5 0a1.5 1.5 0 1 0 3 0a3 3 0 1 0-6 0a4.5 4.5 0 1 0 9 0" fill="none" stroke="#bdbdbd" stroke-width="1.1"/></svg>
<div class="a" style="left:692px;top:1181px;width:90px;height:16px;background:#1e1e1e;"></div>
<div class="t" style="left:699px;top:1184.18px;font-size:11.6px;color:#d4d4d4;font-weight:400;">None</div>
<svg class="a" style="left:768px;top:1186px;" width="9" height="6" viewBox="0 0 9 6"><path d="M0 0h9L4.5 6z" fill="#dcdcdc"/></svg>
<div class="a" style="left:811px;top:1181px;width:1709px;height:15px;background:#937f84;"></div>
<div class="a" style="left:811px;top:1196px;width:1709px;height:2px;background:#363638;"></div>
<div class="a" style="left:811px;top:1182px;width:12px;height:14px;background:rgba(255,255,255,0.08);"></div>
<div class="a" style="left:3px;top:1198px;width:801px;height:17px;background:#262626;"></div>
<div class="a" style="left:3px;top:1214px;width:801px;height:1px;background:#2e2e2e;"></div>
<svg class="a" style="left:6px;top:1201px;" width="14" height="11" viewBox="0 0 14 11"><ellipse cx="7" cy="5.5" rx="6" ry="4" fill="none" stroke="#bdbdbd" stroke-width="1.3"/><circle cx="7" cy="5.5" r="2" fill="#bdbdbd"/></svg>
<div class="a" style="left:36px;top:1199px;width:13px;height:15px;background:#161616;"></div>
<div class="a" style="left:51px;top:1199px;width:13px;height:15px;background:#161616;"></div>
<svg class="a" style="left:74px;top:1202px;" width="9" height="10" viewBox="0 0 9 10"><path d="M1 0l8 5-8 5z" fill="#d0d0d0"/></svg>
<div class="a" style="left:87px;top:1201px;width:12px;height:12px;background:#c2aa84;"></div>
<div class="t" style="left:108px;top:1201.27px;font-size:11.5px;color:#c4c4c4;font-weight:400;">7</div>
<svg class="a" style="left:136px;top:1199px;" width="16" height="15" viewBox="0 0 16 15"><rect x="0.5" y="0.5" width="15" height="14" fill="#8a8a8a"/><rect x="2.5" y="2" width="11" height="10" fill="#1e2430"/><rect x="3.5" y="3" width="4" height="4" fill="#3d7fd0"/><rect x="8.5" y="3" width="4" height="5" fill="#c23b3b"/><path d="M4 12l3-4 3 4z" fill="#2fae4a"/></svg>
<div class="t" style="left:156px;top:1200.84px;font-size:12px;color:#b2b2b2;font-weight:700;">[Pre-comp 2]</div>
<div class="a" style="left:507px;top:1198px;width:68px;height:16px;background:#1e1e1e;"></div>
<div class="t" style="left:512.7px;top:1201.18px;font-size:11.6px;color:#d4d4d4;font-weight:400;">Normal</div>
<svg class="a" style="left:564px;top:1203px;" width="9" height="6" viewBox="0 0 9 6"><path d="M0 0h9L4.5 6z" fill="#dcdcdc"/></svg>
<div class="a" style="left:581px;top:1199px;width:12px;height:15px;background:#161616;"></div>
<svg class="a" style="left:674px;top:1200px;" width="13" height="13" viewBox="0 0 13 13"><path d="M6.5 6.5m-1.5 0a1.5 1.5 0 1 0 3 0a3 3 0 1 0-6 0a4.5 4.5 0 1 0 9 0" fill="none" stroke="#bdbdbd" stroke-width="1.1"/></svg>
<div class="a" style="left:692px;top:1198px;width:90px;height:16px;background:#1e1e1e;"></div>
<div class="t" style="left:699px;top:1201.18px;font-size:11.6px;color:#d4d4d4;font-weight:400;">None</div>
<svg class="a" style="left:768px;top:1203px;" width="9" height="6" viewBox="0 0 9 6"><path d="M0 0h9L4.5 6z" fill="#dcdcdc"/></svg>
<div class="a" style="left:811px;top:1198px;width:1709px;height:15px;background:#746a5a;"></div>
<div class="a" style="left:811px;top:1213px;width:1709px;height:2px;background:#363638;"></div>
<div class="a" style="left:811px;top:1199px;width:12px;height:14px;background:rgba(255,255,255,0.08);"></div>
<div class="a" style="left:3px;top:1215px;width:801px;height:17px;background:#262626;"></div>
<div class="a" style="left:3px;top:1231px;width:801px;height:1px;background:#2e2e2e;"></div>
<svg class="a" style="left:6px;top:1218px;" width="14" height="11" viewBox="0 0 14 11"><ellipse cx="7" cy="5.5" rx="6" ry="4" fill="none" stroke="#bdbdbd" stroke-width="1.3"/><circle cx="7" cy="5.5" r="2" fill="#bdbdbd"/></svg>
<div class="a" style="left:36px;top:1216px;width:13px;height:15px;background:#161616;"></div>
<div class="a" style="left:51px;top:1216px;width:13px;height:15px;background:#161616;"></div>
<svg class="a" style="left:74px;top:1219px;" width="9" height="10" viewBox="0 0 9 10"><path d="M1 0l8 5-8 5z" fill="#d0d0d0"/></svg>
<div class="a" style="left:87px;top:1218px;width:12px;height:12px;background:#c2aa84;"></div>
<div class="t" style="left:108px;top:1218.27px;font-size:11.5px;color:#c4c4c4;font-weight:400;">8</div>
<svg class="a" style="left:136px;top:1216px;" width="16" height="15" viewBox="0 0 16 15"><rect x="0.5" y="0.5" width="15" height="14" fill="#8a8a8a"/><rect x="2.5" y="2" width="11" height="10" fill="#1e2430"/><rect x="3.5" y="3" width="4" height="4" fill="#3d7fd0"/><rect x="8.5" y="3" width="4" height="5" fill="#c23b3b"/><path d="M4 12l3-4 3 4z" fill="#2fae4a"/></svg>
<div class="t" style="left:156px;top:1217.84px;font-size:12px;color:#b2b2b2;font-weight:700;">[Pre-comp 2]</div>
<div class="a" style="left:507px;top:1215px;width:68px;height:16px;background:#1e1e1e;"></div>
<div class="t" style="left:512.7px;top:1218.18px;font-size:11.6px;color:#d4d4d4;font-weight:400;">Normal</div>
<svg class="a" style="left:564px;top:1220px;" width="9" height="6" viewBox="0 0 9 6"><path d="M0 0h9L4.5 6z" fill="#dcdcdc"/></svg>
<div class="a" style="left:581px;top:1216px;width:12px;height:15px;background:#161616;"></div>
<div class="a" style="left:599px;top:1215px;width:66px;height:16px;background:#1e1e1e;"></div>
<div class="t" style="left:606px;top:1218.18px;font-size:11.6px;color:#d4d4d4;font-weight:400;">None</div>
<svg class="a" style="left:652px;top:1220px;" width="9" height="6" viewBox="0 0 9 6"><path d="M0 0h9L4.5 6z" fill="#dcdcdc"/></svg>
<svg class="a" style="left:674px;top:1217px;" width="13" height="13" viewBox="0 0 13 13"><path d="M6.5 6.5m-1.5 0a1.5 1.5 0 1 0 3 0a3 3 0 1 0-6 0a4.5 4.5 0 1 0 9 0" fill="none" stroke="#bdbdbd" stroke-width="1.1"/></svg>
<div class="a" style="left:692px;top:1215px;width:90px;height:16px;background:#1e1e1e;"></div>
<div class="t" style="left:699px;top:1218.18px;font-size:11.6px;color:#d4d4d4;font-weight:400;">None</div>
<svg class="a" style="left:768px;top:1220px;" width="9" height="6" viewBox="0 0 9 6"><path d="M0 0h9L4.5 6z" fill="#dcdcdc"/></svg>
<div class="a" style="left:811px;top:1215px;width:1709px;height:15px;background:#746a5a;"></div>
<div class="a" style="left:811px;top:1230px;width:1709px;height:2px;background:#363638;"></div>
<div class="a" style="left:811px;top:1216px;width:12px;height:14px;background:rgba(255,255,255,0.08);"></div>
<div class="a" style="left:3px;top:1232px;width:801px;height:17px;background:#262626;"></div>
<div class="a" style="left:3px;top:1248px;width:801px;height:1px;background:#2e2e2e;"></div>
<svg class="a" style="left:6px;top:1235px;" width="14" height="11" viewBox="0 0 14 11"><ellipse cx="7" cy="5.5" rx="6" ry="4" fill="none" stroke="#bdbdbd" stroke-width="1.3"/><circle cx="7" cy="5.5" r="2" fill="#bdbdbd"/></svg>
<div class="a" style="left:36px;top:1233px;width:13px;height:15px;background:#161616;"></div>
<div class="a" style="left:51px;top:1233px;width:13px;height:15px;background:#161616;"></div>
<svg class="a" style="left:74px;top:1236px;" width="9" height="10" viewBox="0 0 9 10"><path d="M1 0l8 5-8 5z" fill="#d0d0d0"/></svg>
<div class="a" style="left:87px;top:1235px;width:12px;height:12px;background:#b4b4dc;"></div>
<div class="t" style="left:108px;top:1235.27px;font-size:11.5px;color:#c4c4c4;font-weight:400;">9</div>
<svg class="a" style="left:138px;top:1233px;" width="12" height="15" viewBox="0 0 12 15"><path d="M1 1h7l3 3v10H1z" fill="#e8e8e8"/><rect x="3" y="6" width="5" height="4" fill="#8aa0d0"/></svg>
<div class="t" style="left:156px;top:1234.84px;font-size:12px;color:#b2b2b2;font-weight:700;">[montanhas_kharakhoram.png]</div>
<div class="a" style="left:507px;top:1232px;width:68px;height:16px;background:#1e1e1e;"></div>
<div class="t" style="left:512.7px;top:1235.18px;font-size:11.6px;color:#d4d4d4;font-weight:400;">Multiply</div>
<svg class="a" style="left:564px;top:1237px;" width="9" height="6" viewBox="0 0 9 6"><path d="M0 0h9L4.5 6z" fill="#dcdcdc"/></svg>
<div class="a" style="left:581px;top:1233px;width:12px;height:15px;background:#161616;"></div>
<div class="a" style="left:599px;top:1232px;width:66px;height:16px;background:#1e1e1e;"></div>
<div class="t" style="left:606px;top:1235.18px;font-size:11.6px;color:#d4d4d4;font-weight:400;">None</div>
<svg class="a" style="left:652px;top:1237px;" width="9" height="6" viewBox="0 0 9 6"><path d="M0 0h9L4.5 6z" fill="#dcdcdc"/></svg>
<svg class="a" style="left:674px;top:1234px;" width="13" height="13" viewBox="0 0 13 13"><path d="M6.5 6.5m-1.5 0a1.5 1.5 0 1 0 3 0a3 3 0 1 0-6 0a4.5 4.5 0 1 0 9 0" fill="none" stroke="#bdbdbd" stroke-width="1.1"/></svg>
<div class="a" style="left:692px;top:1232px;width:90px;height:16px;background:#1e1e1e;"></div>
<div class="t" style="left:699px;top:1235.18px;font-size:11.6px;color:#d4d4d4;font-weight:400;">None</div>
<svg class="a" style="left:768px;top:1237px;" width="9" height="6" viewBox="0 0 9 6"><path d="M0 0h9L4.5 6z" fill="#dcdcdc"/></svg>
<div class="a" style="left:811px;top:1232px;width:1709px;height:15px;background:#757488;"></div>
<div class="a" style="left:811px;top:1247px;width:1709px;height:2px;background:#363638;"></div>
<div class="a" style="left:811px;top:1233px;width:12px;height:14px;background:rgba(255,255,255,0.08);"></div>
<div class="a" style="left:3px;top:1249px;width:801px;height:17px;background:#262626;"></div>
<div class="a" style="left:3px;top:1265px;width:801px;height:1px;background:#2e2e2e;"></div>
<svg class="a" style="left:6px;top:1252px;" width="14" height="11" viewBox="0 0 14 11"><ellipse cx="7" cy="5.5" rx="6" ry="4" fill="none" stroke="#bdbdbd" stroke-width="1.3"/><circle cx="7" cy="5.5" r="2" fill="#bdbdbd"/></svg>
<div class="a" style="left:36px;top:1250px;width:13px;height:15px;background:#161616;"></div>
<div class="a" style="left:51px;top:1250px;width:13px;height:15px;background:#161616;"></div>
<svg class="a" style="left:74px;top:1253px;" width="9" height="10" viewBox="0 0 9 10"><path d="M1 0l8 5-8 5z" fill="#d0d0d0"/></svg>
<div class="a" style="left:87px;top:1252px;width:12px;height:12px;background:#b4b4dc;"></div>
<div class="t" style="left:106px;top:1252.27px;font-size:11.5px;color:#c4c4c4;font-weight:400;">10</div>
<svg class="a" style="left:138px;top:1250px;" width="12" height="15" viewBox="0 0 12 15"><path d="M1 1h7l3 3v10H1z" fill="#e8e8e8"/><rect x="3" y="6" width="5" height="4" fill="#8aa0d0"/></svg>
<div class="t" style="left:156px;top:1251.84px;font-size:12px;color:#b2b2b2;font-weight:700;">[montanhas_kharakhoram.png]</div>
<div class="a" style="left:507px;top:1249px;width:68px;height:16px;background:#1e1e1e;"></div>
<div class="t" style="left:512.7px;top:1252.18px;font-size:11.6px;color:#d4d4d4;font-weight:400;">Multiply</div>
<svg class="a" style="left:564px;top:1254px;" width="9" height="6" viewBox="0 0 9 6"><path d="M0 0h9L4.5 6z" fill="#dcdcdc"/></svg>
<div class="a" style="left:581px;top:1250px;width:12px;height:15px;background:#161616;"></div>
<div class="a" style="left:599px;top:1249px;width:66px;height:16px;background:#1e1e1e;"></div>
<div class="t" style="left:606px;top:1252.18px;font-size:11.6px;color:#d4d4d4;font-weight:400;">None</div>
<svg class="a" style="left:652px;top:1254px;" width="9" height="6" viewBox="0 0 9 6"><path d="M0 0h9L4.5 6z" fill="#dcdcdc"/></svg>
<svg class="a" style="left:674px;top:1251px;" width="13" height="13" viewBox="0 0 13 13"><path d="M6.5 6.5m-1.5 0a1.5 1.5 0 1 0 3 0a3 3 0 1 0-6 0a4.5 4.5 0 1 0 9 0" fill="none" stroke="#bdbdbd" stroke-width="1.1"/></svg>
<div class="a" style="left:692px;top:1249px;width:90px;height:16px;background:#1e1e1e;"></div>
<div class="t" style="left:699px;top:1252.18px;font-size:11.6px;color:#d4d4d4;font-weight:400;">None</div>
<svg class="a" style="left:768px;top:1254px;" width="9" height="6" viewBox="0 0 9 6"><path d="M0 0h9L4.5 6z" fill="#dcdcdc"/></svg>
<div class="a" style="left:811px;top:1249px;width:1709px;height:15px;background:#737285;"></div>
<div class="a" style="left:811px;top:1264px;width:1709px;height:2px;background:#363638;"></div>
<div class="a" style="left:811px;top:1250px;width:12px;height:14px;background:rgba(255,255,255,0.08);"></div>
<div class="a" style="left:3px;top:1266px;width:801px;height:17px;background:#262626;"></div>
<div class="a" style="left:3px;top:1282px;width:801px;height:1px;background:#2e2e2e;"></div>
<svg class="a" style="left:6px;top:1269px;" width="14" height="11" viewBox="0 0 14 11"><ellipse cx="7" cy="5.5" rx="6" ry="4" fill="none" stroke="#bdbdbd" stroke-width="1.3"/><circle cx="7" cy="5.5" r="2" fill="#bdbdbd"/></svg>
<div class="a" style="left:36px;top:1267px;width:13px;height:15px;background:#161616;"></div>
<div class="a" style="left:51px;top:1267px;width:13px;height:15px;background:#161616;"></div>
<svg class="a" style="left:74px;top:1270px;" width="9" height="10" viewBox="0 0 9 10"><path d="M1 0l8 5-8 5z" fill="#d0d0d0"/></svg>
<div class="a" style="left:87px;top:1269px;width:12px;height:12px;background:#c2aa84;"></div>
<div class="t" style="left:106px;top:1269.27px;font-size:11.5px;color:#c4c4c4;font-weight:400;">11</div>
<svg class="a" style="left:136px;top:1267px;" width="16" height="15" viewBox="0 0 16 15"><rect x="0.5" y="0.5" width="15" height="14" fill="#8a8a8a"/><rect x="2.5" y="2" width="11" height="10" fill="#1e2430"/><rect x="3.5" y="3" width="4" height="4" fill="#3d7fd0"/><rect x="8.5" y="3" width="4" height="5" fill="#c23b3b"/><path d="M4 12l3-4 3 4z" fill="#2fae4a"/></svg>
<div class="t" style="left:156px;top:1268.84px;font-size:12px;color:#b2b2b2;font-weight:700;">[White Solid 1 Comp 1]</div>
<div class="a" style="left:507px;top:1266px;width:68px;height:16px;background:#1e1e1e;"></div>
<div class="t" style="left:512.7px;top:1269.18px;font-size:11.6px;color:#d4d4d4;font-weight:400;">Normal</div>
<svg class="a" style="left:564px;top:1271px;" width="9" height="6" viewBox="0 0 9 6"><path d="M0 0h9L4.5 6z" fill="#dcdcdc"/></svg>
<div class="a" style="left:581px;top:1267px;width:12px;height:15px;background:#161616;"></div>
<div class="a" style="left:599px;top:1266px;width:66px;height:16px;background:#1e1e1e;"></div>
<div class="t" style="left:606px;top:1269.18px;font-size:11.6px;color:#d4d4d4;font-weight:400;">None</div>
<svg class="a" style="left:652px;top:1271px;" width="9" height="6" viewBox="0 0 9 6"><path d="M0 0h9L4.5 6z" fill="#dcdcdc"/></svg>
<svg class="a" style="left:674px;top:1268px;" width="13" height="13" viewBox="0 0 13 13"><path d="M6.5 6.5m-1.5 0a1.5 1.5 0 1 0 3 0a3 3 0 1 0-6 0a4.5 4.5 0 1 0 9 0" fill="none" stroke="#bdbdbd" stroke-width="1.1"/></svg>
<div class="a" style="left:692px;top:1266px;width:90px;height:16px;background:#1e1e1e;"></div>
<div class="t" style="left:699px;top:1269.18px;font-size:11.6px;color:#d4d4d4;font-weight:400;">None</div>
<svg class="a" style="left:768px;top:1271px;" width="9" height="6" viewBox="0 0 9 6"><path d="M0 0h9L4.5 6z" fill="#dcdcdc"/></svg>
<div class="a" style="left:811px;top:1266px;width:1709px;height:15px;background:#756b5a;"></div>
<div class="a" style="left:811px;top:1281px;width:1709px;height:2px;background:#363638;"></div>
<div class="a" style="left:811px;top:1267px;width:12px;height:14px;background:rgba(255,255,255,0.08);"></div>
<div class="a" style="left:3px;top:1283px;width:801px;height:17px;background:#262626;"></div>
<div class="a" style="left:3px;top:1299px;width:801px;height:1px;background:#2e2e2e;"></div>
<svg class="a" style="left:6px;top:1286px;" width="14" height="11" viewBox="0 0 14 11"><ellipse cx="7" cy="5.5" rx="6" ry="4" fill="none" stroke="#bdbdbd" stroke-width="1.3"/><circle cx="7" cy="5.5" r="2" fill="#bdbdbd"/></svg>
<div class="a" style="left:36px;top:1284px;width:13px;height:15px;background:#161616;"></div>
<div class="a" style="left:51px;top:1284px;width:13px;height:15px;background:#161616;"></div>
<svg class="a" style="left:74px;top:1287px;" width="9" height="10" viewBox="0 0 9 10"><path d="M1 0l8 5-8 5z" fill="#d0d0d0"/></svg>
<div class="a" style="left:87px;top:1286px;width:12px;height:12px;background:#d43a3a;"></div>
<div class="t" style="left:106px;top:1286.27px;font-size:11.5px;color:#c4c4c4;font-weight:400;">12</div>
<div class="a" style="left:137px;top:1285px;width:13px;height:13px;background:#f4f4f4;"></div>
<div class="t" style="left:156px;top:1285.84px;font-size:12px;color:#b2b2b2;font-weight:700;">[White Solid 1]</div>
<div class="a" style="left:507px;top:1283px;width:68px;height:16px;background:#1e1e1e;"></div>
<div class="t" style="left:512.7px;top:1286.18px;font-size:11.6px;color:#d4d4d4;font-weight:400;">Normal</div>
<svg class="a" style="left:564px;top:1288px;" width="9" height="6" viewBox="0 0 9 6"><path d="M0 0h9L4.5 6z" fill="#dcdcdc"/></svg>
<div class="a" style="left:581px;top:1284px;width:12px;height:15px;background:#161616;"></div>
<div class="a" style="left:599px;top:1283px;width:66px;height:16px;background:#1e1e1e;"></div>
<div class="t" style="left:606px;top:1286.18px;font-size:11.6px;color:#d4d4d4;font-weight:400;">None</div>
<svg class="a" style="left:652px;top:1288px;" width="9" height="6" viewBox="0 0 9 6"><path d="M0 0h9L4.5 6z" fill="#dcdcdc"/></svg>
<svg class="a" style="left:674px;top:1285px;" width="13" height="13" viewBox="0 0 13 13"><path d="M6.5 6.5m-1.5 0a1.5 1.5 0 1 0 3 0a3 3 0 1 0-6 0a4.5 4.5 0 1 0 9 0" fill="none" stroke="#bdbdbd" stroke-width="1.1"/></svg>
<div class="a" style="left:692px;top:1283px;width:90px;height:16px;background:#1e1e1e;"></div>
<div class="t" style="left:699px;top:1286.18px;font-size:11.6px;color:#d4d4d4;font-weight:400;">None</div>
<svg class="a" style="left:768px;top:1288px;" width="9" height="6" viewBox="0 0 9 6"><path d="M0 0h9L4.5 6z" fill="#dcdcdc"/></svg>
<div class="a" style="left:811px;top:1283px;width:1709px;height:15px;background:#7b3b40;"></div>
<div class="a" style="left:811px;top:1298px;width:1709px;height:2px;background:#363638;"></div>
<div class="a" style="left:811px;top:1284px;width:12px;height:14px;background:rgba(255,255,255,0.08);"></div>
<div class="a" style="left:805px;top:1300px;width:1715px;height:176px;background:#353535;"></div>
<div class="a" style="left:2188px;top:1300px;width:332px;height:176px;background:#292929;"></div>
<div class="a" style="left:2520px;top:1041px;width:16px;height:435px;background:#1b1b1b;"></div>
<div class="a" style="left:811px;top:1300px;width:13px;height:176px;background:#474747;"></div>
<div class="a" style="left:803px;top:1041px;width:2px;height:435px;background:#161616;"></div>
<div class="a" style="left:809px;top:1096px;width:1.5px;height:380px;background:#2f6f9f;"></div>
<div class="a" style="left:805px;top:1041px;width:1715px;height:55px;background:#232323;"></div>
<div class="a" style="left:805px;top:1045px;width:1715px;height:47px;background:#1e1e1e;"></div>
<div class="a" style="left:806px;top:1047px;width:296px;height:8px;background:#6a6a6a;"></div>
<svg class="a" style="left:802px;top:1048px;" width="9" height="8" viewBox="0 0 9 8"><path d="M8 0v8H4a4 4 0 0 1 0-8z" fill="#3aa0e0"/></svg>
<svg class="a" style="left:1097px;top:1048px;" width="9" height="8" viewBox="0 0 9 8"><path d="M1 0v8h4a4 4 0 0 0 0-8z" fill="#3aa0e0"/></svg>
<div class="a" style="left:867px;top:1071px;width:1px;height:10px;background:#aaa;"></div>
<div class="a" style="left:924px;top:1071px;width:1px;height:10px;background:#aaa;"></div>
<div class="a" style="left:980px;top:1071px;width:1px;height:10px;background:#aaa;"></div>
<div class="a" style="left:1037px;top:1071px;width:1px;height:10px;background:#aaa;"></div>
<div class="a" style="left:1094px;top:1071px;width:1px;height:10px;background:#aaa;"></div>
<div class="a" style="left:1150px;top:1068px;width:1px;height:13px;background:#bbb;"></div>
<div class="a" style="left:1207px;top:1071px;width:1px;height:10px;background:#aaa;"></div>
<div class="a" style="left:1264px;top:1071px;width:1px;height:10px;background:#aaa;"></div>
<div class="a" style="left:1320px;top:1071px;width:1px;height:10px;background:#aaa;"></div>
<div class="a" style="left:1377px;top:1071px;width:1px;height:10px;background:#aaa;"></div>
<div class="a" style="left:1434px;top:1071px;width:1px;height:10px;background:#aaa;"></div>
<div class="a" style="left:1490px;top:1068px;width:1px;height:13px;background:#bbb;"></div>
<div class="a" style="left:1547px;top:1071px;width:1px;height:10px;background:#aaa;"></div>
<div class="a" style="left:1604px;top:1071px;width:1px;height:10px;background:#aaa;"></div>
<div class="a" style="left:1660px;top:1071px;width:1px;height:10px;background:#aaa;"></div>
<div class="a" style="left:1717px;top:1071px;width:1px;height:10px;background:#aaa;"></div>
<div class="a" style="left:1774px;top:1071px;width:1px;height:10px;background:#aaa;"></div>
<div class="a" style="left:1831px;top:1068px;width:1px;height:13px;background:#bbb;"></div>
<div class="a" style="left:1887px;top:1071px;width:1px;height:10px;background:#aaa;"></div>
<div class="a" style="left:1944px;top:1071px;width:1px;height:10px;background:#aaa;"></div>
<div class="a" style="left:2001px;top:1071px;width:1px;height:10px;background:#aaa;"></div>
<div class="a" style="left:2057px;top:1071px;width:1px;height:10px;background:#aaa;"></div>
<div class="a" style="left:2114px;top:1071px;width:1px;height:10px;background:#aaa;"></div>
<div class="a" style="left:2171px;top:1068px;width:1px;height:13px;background:#bbb;"></div>
<div class="a" style="left:2227px;top:1071px;width:1px;height:10px;background:#aaa;"></div>
<div class="a" style="left:2284px;top:1071px;width:1px;height:10px;background:#aaa;"></div>
<div class="a" style="left:2341px;top:1071px;width:1px;height:10px;background:#aaa;"></div>
<div class="a" style="left:2397px;top:1071px;width:1px;height:10px;background:#aaa;"></div>
<div class="a" style="left:2454px;top:1071px;width:1px;height:10px;background:#aaa;"></div>
<div class="a" style="left:2511px;top:1068px;width:1px;height:13px;background:#bbb;"></div>
<div class="a" style="left:0;top:0;width:2519px;height:1100px;overflow:hidden"><div class="t" style="left:814.3px;top:1056.52px;font-size:11.2px;color:#a8a8a8;font-weight:400;">00f</div>
<div class="t" style="left:858.9799999999999px;top:1056.52px;font-size:11.2px;color:#a8a8a8;font-weight:400;">04f</div>
<div class="t" style="left:915.66px;top:1056.52px;font-size:11.2px;color:#a8a8a8;font-weight:400;">08f</div>
<div class="t" style="left:972.3399999999999px;top:1056.52px;font-size:11.2px;color:#a8a8a8;font-weight:400;">12f</div>
<div class="t" style="left:1029.02px;top:1056.52px;font-size:11.2px;color:#a8a8a8;font-weight:400;">16f</div>
<div class="t" style="left:1085.6999999999998px;top:1056.52px;font-size:11.2px;color:#a8a8a8;font-weight:400;">20f</div>
<div class="t" style="left:1134.08px;top:1056.52px;font-size:11.2px;color:#a8a8a8;font-weight:400;">01:00f</div>
<div class="t" style="left:1199.06px;top:1056.52px;font-size:11.2px;color:#a8a8a8;font-weight:400;">04f</div>
<div class="t" style="left:1255.74px;top:1056.52px;font-size:11.2px;color:#a8a8a8;font-weight:400;">08f</div>
<div class="t" style="left:1312.42px;top:1056.52px;font-size:11.2px;color:#a8a8a8;font-weight:400;">12f</div>
<div class="t" style="left:1369.1px;top:1056.52px;font-size:11.2px;color:#a8a8a8;font-weight:400;">16f</div>
<div class="t" style="left:1425.78px;top:1056.52px;font-size:11.2px;color:#a8a8a8;font-weight:400;">20f</div>
<div class="t" style="left:1474.16px;top:1056.52px;font-size:11.2px;color:#a8a8a8;font-weight:400;">02:00f</div>
<div class="t" style="left:1539.1399999999999px;top:1056.52px;font-size:11.2px;color:#a8a8a8;font-weight:400;">04f</div>
<div class="t" style="left:1595.82px;top:1056.52px;font-size:11.2px;color:#a8a8a8;font-weight:400;">08f</div>
<div class="t" style="left:1652.5px;top:1056.52px;font-size:11.2px;color:#a8a8a8;font-weight:400;">12f</div>
<div class="t" style="left:1709.1799999999998px;top:1056.52px;font-size:11.2px;color:#a8a8a8;font-weight:400;">16f</div>
<div class="t" style="left:1765.86px;top:1056.52px;font-size:11.2px;color:#a8a8a8;font-weight:400;">20f</div>
<div class="t" style="left:1814.24px;top:1056.52px;font-size:11.2px;color:#a8a8a8;font-weight:400;">03:00f</div>
<div class="t" style="left:1879.22px;top:1056.52px;font-size:11.2px;color:#a8a8a8;font-weight:400;">04f</div>
<div class="t" style="left:1935.8999999999999px;top:1056.52px;font-size:11.2px;color:#a8a8a8;font-weight:400;">08f</div>
<div class="t" style="left:1992.58px;top:1056.52px;font-size:11.2px;color:#a8a8a8;font-weight:400;">12f</div>
<div class="t" style="left:2049.26px;top:1056.52px;font-size:11.2px;color:#a8a8a8;font-weight:400;">16f</div>
<div class="t" style="left:2105.94px;top:1056.52px;font-size:11.2px;color:#a8a8a8;font-weight:400;">20f</div>
<div class="t" style="left:2154.3199999999997px;top:1056.52px;font-size:11.2px;color:#a8a8a8;font-weight:400;">04:00f</div>
<div class="t" style="left:2219.3px;top:1056.52px;font-size:11.2px;color:#a8a8a8;font-weight:400;">04f</div>
<div class="t" style="left:2275.98px;top:1056.52px;font-size:11.2px;color:#a8a8a8;font-weight:400;">08f</div>
<div class="t" style="left:2332.66px;top:1056.52px;font-size:11.2px;color:#a8a8a8;font-weight:400;">12f</div>
<div class="t" style="left:2389.34px;top:1056.52px;font-size:11.2px;color:#a8a8a8;font-weight:400;">16f</div>
<div class="t" style="left:2446.02px;top:1056.52px;font-size:11.2px;color:#a8a8a8;font-weight:400;">20f</div>
<div class="t" style="left:2494.3999999999996px;top:1056.52px;font-size:11.2px;color:#a8a8a8;font-weight:400;">05:00f</div>
</div><div class="a" style="left:806px;top:1077px;width:1382px;height:14px;background:#6a6a6a;"></div>
<svg class="a" style="left:804px;top:1077px;" width="7" height="14" viewBox="0 0 7 14"><rect x="1" y="0" width="5" height="14" rx="2.5" fill="#3aa0e0"/></svg>
<svg class="a" style="left:2184px;top:1076px;" width="8" height="16" viewBox="0 0 8 16"><rect x="1" y="0" width="6" height="16" rx="3" fill="#3aa0e0"/></svg>
<div class="a" style="left:810px;top:1092px;width:1700px;height:4px;background:#1a1a1a;"></div>
<svg class="a" style="left:804px;top:1060px;" width="13" height="16" viewBox="0 0 13 16"><path d="M0.5 0.5h11v8l-5.5 7-5.5-7z" fill="#3aa0e0" stroke="#8fd0ff" stroke-width="0.8"/></svg>
<div class="a" style="left:810px;top:1092px;width:3px;height:3px;background:#3cc03c;"></div>
<div class="a" style="left:812px;top:1093px;width:12px;height:2px;background:#2d8a2d;"></div>
<svg class="a" style="left:2521px;top:1077px;" width="14" height="18" viewBox="0 0 14 18"><path d="M1 1h12v10l-6 6-6-6z" fill="#6a6a6a" stroke="#aaa" stroke-width="1"/></svg>
<svg class="a" style="left:2523px;top:1100px;" width="13" height="12" viewBox="0 0 13 12"><circle cx="5" cy="5" r="4" fill="none" stroke="#aaa"/><rect x="6" y="5" width="7" height="6" fill="#888"/></svg>
<div class="a" style="left:3px;top:1476px;width:2533px;height:17px;background:#181818;"></div>
<div class="a" style="left:2520px;top:1476px;width:16px;height:17px;background:#2a2a2a;"></div>
<div class="a" style="left:3px;top:1475px;width:2533px;height:1px;background:#111;"></div>
<svg class="a" style="left:8px;top:1478px;" width="14" height="13" viewBox="0 0 14 13"><rect x="3" y="3" width="10" height="9" fill="#777" stroke="#aaa"/><rect x="0" y="0" width="10" height="9" fill="#888" stroke="#aaa"/></svg>
<svg class="a" style="left:25px;top:1477px;" width="14" height="14" viewBox="0 0 14 14"><circle cx="5" cy="5" r="4.5" fill="none" stroke="#3a96dc" stroke-width="1.5"/><rect x="6" y="6" width="7" height="7" fill="none" stroke="#3a96dc" stroke-width="1.5"/></svg>
<div class="t" style="left:43px;top:1478.84px;font-size:12px;color:#aaa;font-weight:400;">{}</div>
<div class="a" style="left:24px;top:1477px;width:1px;height:15px;background:#2a2a2a;"></div>
<div class="t" style="left:526.5px;top:1479.69px;font-size:11px;color:#d8d8d8;font-weight:400;">Toggle Switches / Modes</div>
<div class="a" style="left:505px;top:1477px;width:300px;height:15px;background:#262626;"></div>
<div class="t" style="left:526.5px;top:1479.69px;font-size:11px;color:#d8d8d8;font-weight:400;">Toggle Switches / Modes</div>
<svg class="a" style="left:807px;top:1483px;" width="10" height="6" viewBox="0 0 10 6"><path d="M0 6L5 0l5 6z" fill="#c8c8c8"/></svg>
<div class="a" style="left:835px;top:1486px;width:40px;height:1px;background:#3a3a3a;"></div>
<svg class="a" style="left:866px;top:1479px;" width="9" height="12" viewBox="0 0 9 12"><path d="M0 3l4.5-3L9 3v9H0z" fill="#8a8a8a"/></svg>
<svg class="a" style="left:888px;top:1480px;" width="17" height="9" viewBox="0 0 17 9"><path d="M0 9L5 2l3 4 3-6 6 9z" fill="#c8c8c8"/></svg>
<div class="a" style="left:910px;top:1477px;width:1270px;height:15px;background:#1a1a1a;"></div>
<svg class="a" style="left:228px;top:1181px;" width="14" height="20" viewBox="0 0 14 20"><path d="M1 1v15l4-4 3 6 2.5-1-3-6h5.5z" fill="#111" stroke="#eee" stroke-width="1"/></svg>
<!-- p6_dock -->
<div class="a" style="left:1023px;top:1496px;width:514px;height:23px;background:linear-gradient(#787878,#676767);border-radius:2px"></div>
<svg class="a" style="left:1025px;top:1498px;" width="15" height="15" viewBox="0 0 15 15"><rect width="15" height="15" rx="2" fill="#2f86e0"/><rect x="7.5" width="7.5" height="15" fill="#dfe9f5"/><path d="M4 5v2M10 5v2M4 10q3.5 2 7 0" stroke="#123" stroke-width="1"/></svg>
<div class="a" style="left:1043.5px;top:1497.5px;width:15px;height:15px;border-radius:50%;background:#8d8d8d;border:1px solid #bbb"></div>
<svg class="a" style="left:1062px;top:1498px;" width="14" height="15" viewBox="0 0 14 15"><rect width="14" height="15" rx="2" fill="#2a2a2a"/><circle cx="10" cy="10" r="3" fill="#3ab04a"/><rect x="2" y="3" width="5" height="5" fill="#3a70c0"/></svg>
<svg class="a" style="left:1079px;top:1498px;" width="14" height="15" viewBox="0 0 14 15"><rect width="14" height="15" rx="2" fill="#e8d8d8"/><rect width="14" height="4" fill="#d66"/></svg>
<svg class="a" style="left:1097px;top:1497px;" width="16" height="16" viewBox="0 0 16 16"><circle cx="8" cy="8" r="7.5" fill="#3a8ae0" stroke="#ddd"/><path d="M11 4l-4 3-2 5 4-3z" fill="#f0f0f0"/></svg>
<svg class="a" style="left:1115px;top:1497px;" width="16" height="16" viewBox="0 0 16 16"><circle cx="8" cy="8" r="7.5" fill="#3a9ae8"/><rect x="5" y="6" width="9" height="5" rx="2" fill="#fff"/></svg>
<div class="t" style="left:1136.6px;top:1497.96px;font-size:16px;color:#9a9a9a;font-weight:400;">?</div>
<svg class="a" style="left:1151px;top:1498px;" width="16" height="15" viewBox="0 0 16 15"><path d="M2 4l8-3 5 5-3 8-8-2z" fill="#e8e8e8"/><circle cx="8" cy="8" r="2.5" fill="#aaa"/></svg>
<div class="a" style="left:1169.0px;top:1497.5px;width:15px;height:15px;border-radius:50%;background:#1a9ae8;border:1px solid #2ab0f8"></div>
<div class="t" style="left:1173px;top:1501.88px;font-size:9px;color:#fff;font-weight:700;">S</div>
<svg class="a" style="left:1187px;top:1497px;" width="16" height="16" viewBox="0 0 16 16"><circle cx="8" cy="8" r="7.5" fill="#dde" /><circle cx="8" cy="8" r="6" fill="#1a2a50"/><circle cx="8" cy="8" r="2.5" fill="#5a7ab0"/></svg>
<svg class="a" style="left:1205px;top:1497px;" width="16" height="16" viewBox="0 0 16 16"><circle cx="8" cy="8" r="7.5" fill="#dde" /><circle cx="8" cy="8" r="6" fill="#1a2a50"/><circle cx="8" cy="8" r="2.5" fill="#5a7ab0"/></svg>
<div class="a" style="left:1223.2px;top:1498px;width:15px;height:15px;background:#2f1a0e;border:1px solid #8a5a30;border-radius:2px"></div>
<div class="t" style="left:1224.7px;top:1502.30px;font-size:8.5px;color:#e09050;font-weight:700;">Br</div>
<div class="a" style="left:1240.5px;top:1498px;width:15px;height:15px;background:#0c1e2e;border:1px solid #2a6a9a;border-radius:2px"></div>
<div class="t" style="left:1242px;top:1502.30px;font-size:8.5px;color:#40a8e8;font-weight:700;">Ps</div>
<div class="a" style="left:1259.0px;top:1498px;width:15px;height:15px;background:#1e1236;border:1px solid #7a5ac0;border-radius:2px"></div>
<div class="t" style="left:1260.5px;top:1502.30px;font-size:8.5px;color:#b8a0f0;font-weight:700;">Ae</div>
<div class="a" style="left:1277.2px;top:1498px;width:15px;height:15px;background:#2e0a18;border:1px solid #a03060;border-radius:2px"></div>
<div class="t" style="left:1278.7px;top:1502.30px;font-size:8.5px;color:#e05080;font-weight:700;">Id</div>
<div class="a" style="left:1295.1px;top:1498px;width:15px;height:15px;background:#2e1206;border:1px solid #b05a20;border-radius:2px"></div>
<div class="t" style="left:1296.6px;top:1502.30px;font-size:8.5px;color:#f08030;font-weight:700;">Ai</div>
<div class="a" style="left:1313.1px;top:1498px;width:15px;height:15px;background:#1a0e30;border:1px solid #6a4ab0;border-radius:2px"></div>
<div class="t" style="left:1314.6px;top:1502.30px;font-size:8.5px;color:#a890f0;font-weight:700;">Pr</div>
<div class="a" style="left:1331.1px;top:1497.5px;width:15px;height:15px;border-radius:50%;background:#2db34a;border:1px solid #3ac85a"></div>
<div class="a" style="left:1348.2px;top:1497.5px;width:15px;height:15px;border-radius:50%;background:#9a9a9a;border:1px solid #ccc"></div>
<div class="a" style="left:1367.0px;top:1497.5px;width:15px;height:15px;border-radius:50%;background:#2f8ae0;border:1px solid #8ac0f0"></div>
<svg class="a" style="left:1384px;top:1498px;" width="16" height="15" viewBox="0 0 16 15"><rect width="16" height="15" rx="2" fill="#3a7ad0" opacity="0.3"/><path d="M1 2l3 11 4-9 4 9 3-11" fill="none" stroke="#5aa0e8" stroke-width="2"/></svg>
<svg class="a" style="left:1402px;top:1497px;" width="16" height="16" viewBox="0 0 16 16"><rect width="16" height="16" rx="1" fill="#111"/><circle cx="8" cy="8" r="5" fill="#6a5a3a"/></svg>
<svg class="a" style="left:1420px;top:1497px;" width="17" height="16" viewBox="0 0 17 16"><rect x="1" y="2" width="15" height="12" fill="#4a90d8"/><rect x="3" y="5" width="11" height="7" fill="#cde"/></svg>
<div class="a" style="left:1442px;top:1499px;width:1px;height:16px;background:#4a4a4a;"></div>
<svg class="a" style="left:1447px;top:1499px;" width="15" height="13" viewBox="0 0 15 13"><rect width="15" height="11" fill="#1a1a1a"/><rect x="3" y="3" width="9" height="5" fill="#555"/></svg>
<svg class="a" style="left:1465px;top:1498px;" width="16" height="15" viewBox="0 0 16 15"><rect x="0" y="0" width="16" height="15" fill="#ddd"/><rect x="2" y="2" width="6" height="11" fill="#999"/><rect x="9" y="2" width="5" height="5" fill="#5a8ad0"/></svg>
<svg class="a" style="left:1484px;top:1498px;" width="16" height="15" viewBox="0 0 16 15"><rect x="0" y="2" width="14" height="10" fill="#ccc"/><rect x="2" y="4" width="10" height="4" fill="#333"/><rect x="8" y="10" width="8" height="5" fill="#5a8ad0"/></svg>
<svg class="a" style="left:1501px;top:1498px;" width="16" height="15" viewBox="0 0 16 15"><rect x="0" y="2" width="14" height="10" fill="#ccc"/><rect x="2" y="4" width="10" height="4" fill="#333"/><rect x="8" y="10" width="8" height="5" fill="#5a8ad0"/></svg>
<svg class="a" style="left:1521px;top:1497px;" width="13" height="16" viewBox="0 0 13 16"><path d="M1 3h11l-1.5 13h-8z" fill="#e0e0e0" stroke="#aaa" stroke-width="0.6"/><rect x="0" y="1" width="13" height="2" fill="#ccc"/></svg>
<div class="a" style="left:1031px;top:1515px;width:2px;height:2px;background:#111;border-radius:1px"></div>
<div class="a" style="left:1104px;top:1515px;width:2px;height:2px;background:#111;border-radius:1px"></div>
<div class="a" style="left:1247px;top:1515px;width:2px;height:2px;background:#111;border-radius:1px"></div>
<div class="a" style="left:1266px;top:1515px;width:2px;height:2px;background:#111;border-radius:1px"></div>
<div class="a" style="left:1337px;top:1515px;width:2px;height:2px;background:#111;border-radius:1px"></div>
<div class="a" style="left:1409px;top:1515px;width:2px;height:2px;background:#111;border-radius:1px"></div>
<div class="a" style="left:1428px;top:1515px;width:2px;height:2px;background:#111;border-radius:1px"></div>
</body></html>
